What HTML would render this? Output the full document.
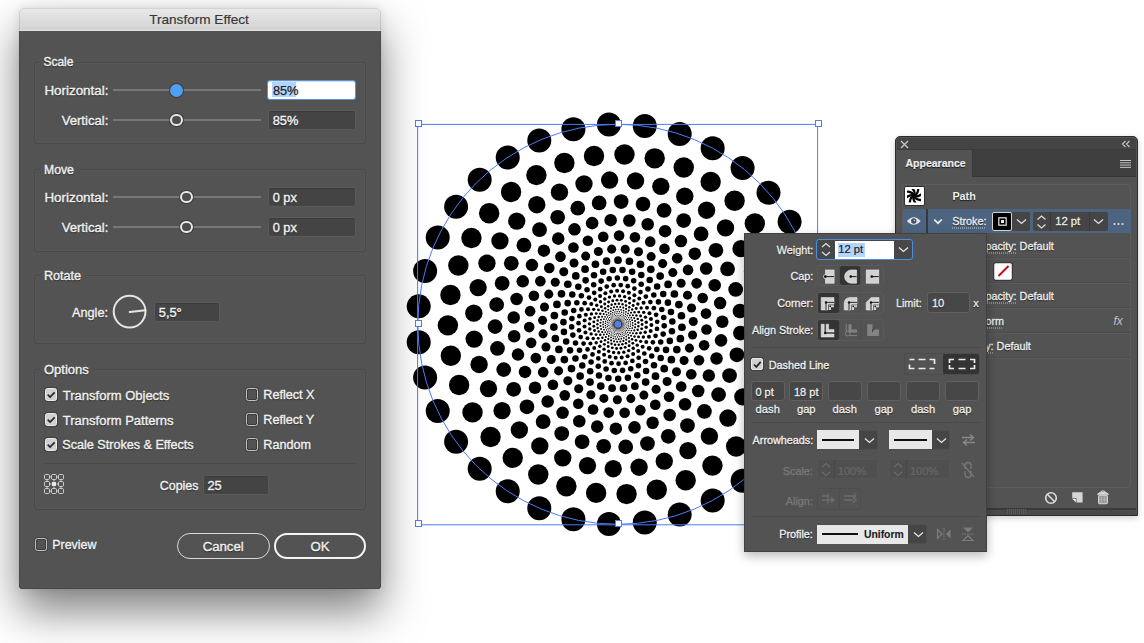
<!DOCTYPE html>
<html><head><meta charset="utf-8">
<style>
*{box-sizing:border-box;margin:0;padding:0}
html,body{width:1144px;height:643px;overflow:hidden;background:#fff;font-family:"Liberation Sans",sans-serif;position:relative}
.a{position:absolute}
.t{position:absolute;white-space:nowrap;line-height:1;color:#efefef}
/* dialog */
#dlgsh{position:absolute;left:19px;top:9px;width:362px;height:579px;border-radius:5px;box-shadow:0 14px 38px rgba(0,0,0,.42),0 0 3px rgba(0,0,0,.25)}
#dlg{position:absolute;left:19px;top:9px;width:362px;height:579px;border-radius:5px 5px 4px 4px;background:#535353;overflow:hidden}
#dlg .title{position:absolute;left:0;top:0;width:362px;height:21.5px;background:linear-gradient(#ececec,#d6d6d6);border-bottom:1px solid #bdbdbd}
.grp{position:absolute;left:16px;width:330px;border:1px solid #4a4a4a;border-radius:3px;box-shadow:inset 0 0 0 1px rgba(255,255,255,.025)}
.lbl{font-size:13px;color:#eeeeee;text-shadow:0 0 1px rgba(0,0,0,.6)}
.legend{background:#535353;padding:0 3px}
.track{position:absolute;height:2px;background:#777}
.thumb{position:absolute;width:12.5px;height:12.5px;border-radius:50%;border:2px solid #e8e8e8;background:#4d4d4d;box-shadow:0 0 0 1px rgba(40,40,40,.6)}
.inp{position:absolute;background:#444;border:1px solid #5a5a5a;border-radius:3px;box-shadow:inset 0 1px 1px rgba(0,0,0,.15)}
.cb{position:absolute;width:12.5px;height:12.8px;border:1.2px solid #c4c4c4;border-radius:2.5px;box-shadow:0 0 0 1px rgba(0,0,0,.18),inset 0 0 0 1px rgba(0,0,0,.3)}
.cbon{background:#d0d0d0;border-color:#ececec;box-shadow:0 0 0 1px rgba(0,0,0,.22)}
.btn{position:absolute;border-radius:13px;border:1.8px solid #dadada}
/* panels */
.pt{font-size:10.7px;color:#e8e8e8}
</style></head><body>
<!-- canvas -->
<svg class="a" style="left:0;top:0" width="1144" height="643" viewBox="0 0 1144 643">
<g fill="#000"><circle cx="817.90" cy="324.30" r="12.00"/>
<circle cx="814.69" cy="360.01" r="12.00"/>
<circle cx="805.15" cy="394.57" r="12.00"/>
<circle cx="789.59" cy="426.88" r="12.00"/>
<circle cx="768.51" cy="455.89" r="12.00"/>
<circle cx="742.60" cy="480.67" r="12.00"/>
<circle cx="712.67" cy="500.42" r="12.00"/>
<circle cx="679.70" cy="514.51" r="12.00"/>
<circle cx="644.75" cy="522.49" r="12.00"/>
<circle cx="608.93" cy="524.10" r="12.00"/>
<circle cx="573.40" cy="519.29" r="12.00"/>
<circle cx="539.29" cy="508.21" r="12.00"/>
<circle cx="507.72" cy="491.21" r="12.00"/>
<circle cx="479.69" cy="468.86" r="12.00"/>
<circle cx="456.10" cy="441.86" r="12.00"/>
<circle cx="437.71" cy="411.08" r="12.00"/>
<circle cx="425.11" cy="377.51" r="12.00"/>
<circle cx="418.71" cy="342.23" r="12.00"/>
<circle cx="418.71" cy="306.37" r="12.00"/>
<circle cx="425.11" cy="271.09" r="12.00"/>
<circle cx="437.71" cy="237.52" r="12.00"/>
<circle cx="456.10" cy="206.74" r="12.00"/>
<circle cx="479.69" cy="179.74" r="12.00"/>
<circle cx="507.72" cy="157.39" r="12.00"/>
<circle cx="539.29" cy="140.39" r="12.00"/>
<circle cx="573.40" cy="129.31" r="12.00"/>
<circle cx="608.93" cy="124.50" r="12.00"/>
<circle cx="644.75" cy="126.11" r="12.00"/>
<circle cx="679.70" cy="134.09" r="12.00"/>
<circle cx="712.67" cy="148.18" r="12.00"/>
<circle cx="742.60" cy="167.93" r="12.00"/>
<circle cx="768.51" cy="192.71" r="12.00"/>
<circle cx="789.59" cy="221.72" r="12.00"/>
<circle cx="805.15" cy="254.03" r="12.00"/>
<circle cx="814.69" cy="288.59" r="12.00"/>
<circle cx="787.12" cy="308.01" r="10.20"/>
<circle cx="787.31" cy="338.48" r="10.20"/>
<circle cx="782.05" cy="368.50" r="10.20"/>
<circle cx="771.52" cy="397.10" r="10.20"/>
<circle cx="756.05" cy="423.36" r="10.20"/>
<circle cx="736.14" cy="446.44" r="10.20"/>
<circle cx="712.44" cy="465.59" r="10.20"/>
<circle cx="685.69" cy="480.20" r="10.20"/>
<circle cx="656.76" cy="489.80" r="10.20"/>
<circle cx="626.59" cy="494.08" r="10.20"/>
<circle cx="596.13" cy="492.90" r="10.20"/>
<circle cx="566.38" cy="486.30" r="10.20"/>
<circle cx="538.28" cy="474.50" r="10.20"/>
<circle cx="512.74" cy="457.87" r="10.20"/>
<circle cx="490.58" cy="436.95" r="10.20"/>
<circle cx="472.51" cy="412.40" r="10.20"/>
<circle cx="459.12" cy="385.02" r="10.20"/>
<circle cx="450.82" cy="355.70" r="10.20"/>
<circle cx="447.90" cy="325.36" r="10.20"/>
<circle cx="450.45" cy="294.99" r="10.20"/>
<circle cx="458.37" cy="265.56" r="10.20"/>
<circle cx="471.42" cy="238.02" r="10.20"/>
<circle cx="489.18" cy="213.25" r="10.20"/>
<circle cx="511.08" cy="192.05" r="10.20"/>
<circle cx="536.41" cy="175.10" r="10.20"/>
<circle cx="564.36" cy="162.95" r="10.20"/>
<circle cx="594.03" cy="155.98" r="10.20"/>
<circle cx="624.47" cy="154.43" r="10.20"/>
<circle cx="654.69" cy="158.33" r="10.20"/>
<circle cx="683.74" cy="167.57" r="10.20"/>
<circle cx="710.67" cy="181.84" r="10.20"/>
<circle cx="734.61" cy="200.69" r="10.20"/>
<circle cx="754.81" cy="223.52" r="10.20"/>
<circle cx="770.60" cy="249.59" r="10.20"/>
<circle cx="781.49" cy="278.05" r="10.20"/>
<circle cx="759.75" cy="296.73" r="8.67"/>
<circle cx="762.39" cy="322.50" r="8.67"/>
<circle cx="760.39" cy="348.33" r="8.67"/>
<circle cx="753.81" cy="373.38" r="8.67"/>
<circle cx="742.86" cy="396.86" r="8.67"/>
<circle cx="727.90" cy="418.01" r="8.67"/>
<circle cx="709.40" cy="436.14" r="8.67"/>
<circle cx="687.95" cy="450.68" r="8.67"/>
<circle cx="664.26" cy="461.16" r="8.67"/>
<circle cx="639.08" cy="467.24" r="8.67"/>
<circle cx="613.22" cy="468.72" r="8.67"/>
<circle cx="587.50" cy="465.57" r="8.67"/>
<circle cx="562.77" cy="457.87" r="8.67"/>
<circle cx="539.80" cy="445.88" r="8.67"/>
<circle cx="519.35" cy="429.98" r="8.67"/>
<circle cx="502.06" cy="410.69" r="8.67"/>
<circle cx="488.50" cy="388.61" r="8.67"/>
<circle cx="479.10" cy="364.48" r="8.67"/>
<circle cx="474.15" cy="339.05" r="8.67"/>
<circle cx="473.83" cy="313.14" r="8.67"/>
<circle cx="478.14" cy="287.60" r="8.67"/>
<circle cx="486.94" cy="263.23" r="8.67"/>
<circle cx="499.95" cy="240.83" r="8.67"/>
<circle cx="516.75" cy="221.11" r="8.67"/>
<circle cx="536.80" cy="204.71" r="8.67"/>
<circle cx="559.46" cy="192.15" r="8.67"/>
<circle cx="583.99" cy="183.83" r="8.67"/>
<circle cx="609.62" cy="180.04" r="8.67"/>
<circle cx="635.51" cy="180.88" r="8.67"/>
<circle cx="660.84" cy="186.33" r="8.67"/>
<circle cx="684.78" cy="196.21" r="8.67"/>
<circle cx="706.58" cy="210.21" r="8.67"/>
<circle cx="725.53" cy="227.88" r="8.67"/>
<circle cx="741.01" cy="248.65" r="8.67"/>
<circle cx="752.54" cy="271.84" r="8.67"/>
<circle cx="735.67" cy="289.42" r="7.37"/>
<circle cx="740.00" cy="311.00" r="7.37"/>
<circle cx="740.42" cy="333.02" r="7.37"/>
<circle cx="736.89" cy="354.76" r="7.37"/>
<circle cx="729.54" cy="375.51" r="7.37"/>
<circle cx="718.60" cy="394.62" r="7.37"/>
<circle cx="704.42" cy="411.47" r="7.37"/>
<circle cx="687.47" cy="425.52" r="7.37"/>
<circle cx="668.28" cy="436.32" r="7.37"/>
<circle cx="647.47" cy="443.51" r="7.37"/>
<circle cx="625.70" cy="446.88" r="7.37"/>
<circle cx="603.69" cy="446.30" r="7.37"/>
<circle cx="582.14" cy="441.80" r="7.37"/>
<circle cx="561.73" cy="433.53" r="7.37"/>
<circle cx="543.13" cy="421.74" r="7.37"/>
<circle cx="526.93" cy="406.83" r="7.37"/>
<circle cx="513.66" cy="389.26" r="7.37"/>
<circle cx="503.73" cy="369.60" r="7.37"/>
<circle cx="497.48" cy="348.49" r="7.37"/>
<circle cx="495.10" cy="326.60" r="7.37"/>
<circle cx="496.66" cy="304.63" r="7.37"/>
<circle cx="502.12" cy="283.30" r="7.37"/>
<circle cx="511.30" cy="263.29" r="7.37"/>
<circle cx="523.91" cy="245.23" r="7.37"/>
<circle cx="539.54" cy="229.72" r="7.37"/>
<circle cx="557.68" cy="217.25" r="7.37"/>
<circle cx="577.77" cy="208.22" r="7.37"/>
<circle cx="599.14" cy="202.92" r="7.37"/>
<circle cx="621.12" cy="201.52" r="7.37"/>
<circle cx="642.99" cy="204.06" r="7.37"/>
<circle cx="664.05" cy="210.48" r="7.37"/>
<circle cx="683.64" cy="220.55" r="7.37"/>
<circle cx="701.10" cy="233.95" r="7.37"/>
<circle cx="715.90" cy="250.26" r="7.37"/>
<circle cx="727.55" cy="268.95" r="7.37"/>
<circle cx="714.70" cy="285.19" r="6.26"/>
<circle cx="720.13" cy="303.10" r="6.26"/>
<circle cx="722.27" cy="321.70" r="6.26"/>
<circle cx="721.06" cy="340.37" r="6.26"/>
<circle cx="716.53" cy="358.54" r="6.26"/>
<circle cx="708.83" cy="375.60" r="6.26"/>
<circle cx="698.21" cy="391.01" r="6.26"/>
<circle cx="685.01" cy="404.28" r="6.26"/>
<circle cx="669.65" cy="414.97" r="6.26"/>
<circle cx="652.63" cy="422.76" r="6.26"/>
<circle cx="634.49" cy="427.37" r="6.26"/>
<circle cx="615.82" cy="428.68" r="6.26"/>
<circle cx="597.21" cy="426.63" r="6.26"/>
<circle cx="579.27" cy="421.29" r="6.26"/>
<circle cx="562.58" cy="412.84" r="6.26"/>
<circle cx="547.66" cy="401.54" r="6.26"/>
<circle cx="534.99" cy="387.75" r="6.26"/>
<circle cx="525.00" cy="371.93" r="6.26"/>
<circle cx="517.98" cy="354.57" r="6.26"/>
<circle cx="514.18" cy="336.25" r="6.26"/>
<circle cx="513.72" cy="317.54" r="6.26"/>
<circle cx="516.60" cy="299.04" r="6.26"/>
<circle cx="522.74" cy="281.36" r="6.26"/>
<circle cx="531.93" cy="265.06" r="6.26"/>
<circle cx="543.89" cy="250.66" r="6.26"/>
<circle cx="558.23" cy="238.63" r="6.26"/>
<circle cx="574.49" cy="229.35" r="6.26"/>
<circle cx="592.14" cy="223.13" r="6.26"/>
<circle cx="610.62" cy="220.15" r="6.26"/>
<circle cx="629.33" cy="220.53" r="6.26"/>
<circle cx="647.68" cy="224.24" r="6.26"/>
<circle cx="665.07" cy="231.16" r="6.26"/>
<circle cx="680.94" cy="241.08" r="6.26"/>
<circle cx="694.78" cy="253.67" r="6.26"/>
<circle cx="706.16" cy="268.53" r="6.26"/>
<circle cx="696.61" cy="283.32" r="5.32"/>
<circle cx="702.67" cy="298.04" r="5.32"/>
<circle cx="705.99" cy="313.59" r="5.32"/>
<circle cx="706.49" cy="329.50" r="5.32"/>
<circle cx="704.14" cy="345.23" r="5.32"/>
<circle cx="699.01" cy="360.29" r="5.32"/>
<circle cx="691.28" cy="374.20" r="5.32"/>
<circle cx="681.19" cy="386.50" r="5.32"/>
<circle cx="669.07" cy="396.80" r="5.32"/>
<circle cx="655.30" cy="404.77" r="5.32"/>
<circle cx="640.33" cy="410.16" r="5.32"/>
<circle cx="624.64" cy="412.78" r="5.32"/>
<circle cx="608.73" cy="412.57" r="5.32"/>
<circle cx="593.12" cy="409.51" r="5.32"/>
<circle cx="578.30" cy="403.72" r="5.32"/>
<circle cx="564.76" cy="395.37" r="5.32"/>
<circle cx="552.92" cy="384.74" r="5.32"/>
<circle cx="543.18" cy="372.17" r="5.32"/>
<circle cx="535.83" cy="358.06" r="5.32"/>
<circle cx="531.12" cy="342.86" r="5.32"/>
<circle cx="529.20" cy="327.07" r="5.32"/>
<circle cx="530.13" cy="311.18" r="5.32"/>
<circle cx="533.89" cy="295.72" r="5.32"/>
<circle cx="540.34" cy="281.18" r="5.32"/>
<circle cx="549.28" cy="268.02" r="5.32"/>
<circle cx="560.44" cy="256.68" r="5.32"/>
<circle cx="573.43" cy="247.50" r="5.32"/>
<circle cx="587.86" cy="240.80" r="5.32"/>
<circle cx="603.25" cy="236.78" r="5.32"/>
<circle cx="619.12" cy="235.57" r="5.32"/>
<circle cx="634.94" cy="237.21" r="5.32"/>
<circle cx="650.22" cy="241.65" r="5.32"/>
<circle cx="664.46" cy="248.75" r="5.32"/>
<circle cx="677.20" cy="258.28" r="5.32"/>
<circle cx="688.03" cy="269.93" r="5.32"/>
<circle cx="681.16" cy="283.22" r="4.53"/>
<circle cx="687.48" cy="295.17" r="4.53"/>
<circle cx="691.56" cy="308.07" r="4.53"/>
<circle cx="693.28" cy="321.48" r="4.53"/>
<circle cx="692.57" cy="334.98" r="4.53"/>
<circle cx="689.46" cy="348.15" r="4.53"/>
<circle cx="684.05" cy="360.54" r="4.53"/>
<circle cx="676.52" cy="371.77" r="4.53"/>
<circle cx="667.10" cy="381.47" r="4.53"/>
<circle cx="656.10" cy="389.34" r="4.53"/>
<circle cx="643.88" cy="395.12" r="4.53"/>
<circle cx="630.81" cy="398.62" r="4.53"/>
<circle cx="617.34" cy="399.73" r="4.53"/>
<circle cx="603.88" cy="398.41" r="4.53"/>
<circle cx="590.87" cy="394.72" r="4.53"/>
<circle cx="578.73" cy="388.76" r="4.53"/>
<circle cx="567.85" cy="380.73" r="4.53"/>
<circle cx="558.58" cy="370.89" r="4.53"/>
<circle cx="551.21" cy="359.55" r="4.53"/>
<circle cx="545.99" cy="347.07" r="4.53"/>
<circle cx="543.08" cy="333.87" r="4.53"/>
<circle cx="542.57" cy="320.35" r="4.53"/>
<circle cx="544.49" cy="306.97" r="4.53"/>
<circle cx="548.76" cy="294.14" r="4.53"/>
<circle cx="555.26" cy="282.28" r="4.53"/>
<circle cx="563.77" cy="271.77" r="4.53"/>
<circle cx="574.02" cy="262.95" r="4.53"/>
<circle cx="585.68" cy="256.10" r="4.53"/>
<circle cx="598.38" cy="251.44" r="4.53"/>
<circle cx="611.70" cy="249.13" r="4.53"/>
<circle cx="625.22" cy="249.23" r="4.53"/>
<circle cx="638.51" cy="251.74" r="4.53"/>
<circle cx="651.14" cy="256.59" r="4.53"/>
<circle cx="662.69" cy="263.61" r="4.53"/>
<circle cx="672.81" cy="272.58" r="4.53"/>
<circle cx="668.08" cy="284.39" r="3.85"/>
<circle cx="674.40" cy="293.99" r="3.85"/>
<circle cx="678.90" cy="304.56" r="3.85"/>
<circle cx="681.45" cy="315.77" r="3.85"/>
<circle cx="681.95" cy="327.26" r="3.85"/>
<circle cx="680.39" cy="338.64" r="3.85"/>
<circle cx="676.82" cy="349.57" r="3.85"/>
<circle cx="671.36" cy="359.69" r="3.85"/>
<circle cx="664.19" cy="368.67" r="3.85"/>
<circle cx="655.52" cy="376.22" r="3.85"/>
<circle cx="645.65" cy="382.10" r="3.85"/>
<circle cx="634.88" cy="386.13" r="3.85"/>
<circle cx="623.57" cy="388.16" r="3.85"/>
<circle cx="612.07" cy="388.15" r="3.85"/>
<circle cx="600.77" cy="386.08" r="3.85"/>
<circle cx="590.01" cy="382.03" r="3.85"/>
<circle cx="580.15" cy="376.12" r="3.85"/>
<circle cx="571.50" cy="368.55" r="3.85"/>
<circle cx="564.35" cy="359.55" r="3.85"/>
<circle cx="558.91" cy="349.43" r="3.85"/>
<circle cx="555.37" cy="338.49" r="3.85"/>
<circle cx="553.85" cy="327.10" r="3.85"/>
<circle cx="554.38" cy="315.61" r="3.85"/>
<circle cx="556.95" cy="304.41" r="3.85"/>
<circle cx="561.48" cy="293.85" r="3.85"/>
<circle cx="567.82" cy="284.26" r="3.85"/>
<circle cx="575.78" cy="275.96" r="3.85"/>
<circle cx="585.08" cy="269.22" r="3.85"/>
<circle cx="595.45" cy="264.24" r="3.85"/>
<circle cx="606.53" cy="261.20" r="3.85"/>
<circle cx="617.98" cy="260.18" r="3.85"/>
<circle cx="629.43" cy="261.23" r="3.85"/>
<circle cx="640.50" cy="264.30" r="3.85"/>
<circle cx="650.85" cy="269.30" r="3.85"/>
<circle cx="660.14" cy="276.07" r="3.85"/>
<circle cx="657.10" cy="286.44" r="3.27"/>
<circle cx="663.23" cy="294.05" r="3.27"/>
<circle cx="667.91" cy="302.63" r="3.27"/>
<circle cx="670.97" cy="311.91" r="3.27"/>
<circle cx="672.33" cy="321.58" r="3.27"/>
<circle cx="671.94" cy="331.35" r="3.27"/>
<circle cx="669.81" cy="340.88" r="3.27"/>
<circle cx="666.02" cy="349.89" r="3.27"/>
<circle cx="660.68" cy="358.07" r="3.27"/>
<circle cx="653.96" cy="365.16" r="3.27"/>
<circle cx="646.08" cy="370.94" r="3.27"/>
<circle cx="637.30" cy="375.23" r="3.27"/>
<circle cx="627.90" cy="377.87" r="3.27"/>
<circle cx="618.17" cy="378.80" r="3.27"/>
<circle cx="608.44" cy="377.97" r="3.27"/>
<circle cx="599.01" cy="375.42" r="3.27"/>
<circle cx="590.18" cy="371.22" r="3.27"/>
<circle cx="582.25" cy="365.52" r="3.27"/>
<circle cx="575.46" cy="358.49" r="3.27"/>
<circle cx="570.04" cy="350.36" r="3.27"/>
<circle cx="566.15" cy="341.40" r="3.27"/>
<circle cx="563.93" cy="331.88" r="3.27"/>
<circle cx="563.45" cy="322.13" r="3.27"/>
<circle cx="564.71" cy="312.44" r="3.27"/>
<circle cx="567.68" cy="303.13" r="3.27"/>
<circle cx="572.27" cy="294.50" r="3.27"/>
<circle cx="578.32" cy="286.84" r="3.27"/>
<circle cx="585.65" cy="280.37" r="3.27"/>
<circle cx="594.01" cy="275.32" r="3.27"/>
<circle cx="603.14" cy="271.84" r="3.27"/>
<circle cx="612.74" cy="270.05" r="3.27"/>
<circle cx="622.51" cy="270.00" r="3.27"/>
<circle cx="632.14" cy="271.69" r="3.27"/>
<circle cx="641.30" cy="275.08" r="3.27"/>
<circle cx="649.71" cy="280.05" r="3.27"/>
<circle cx="647.98" cy="289.08" r="2.78"/>
<circle cx="653.79" cy="295.01" r="2.78"/>
<circle cx="658.44" cy="301.89" r="2.78"/>
<circle cx="661.79" cy="309.49" r="2.78"/>
<circle cx="663.73" cy="317.57" r="2.78"/>
<circle cx="664.20" cy="325.86" r="2.78"/>
<circle cx="663.17" cy="334.10" r="2.78"/>
<circle cx="660.70" cy="342.03" r="2.78"/>
<circle cx="656.84" cy="349.38" r="2.78"/>
<circle cx="651.74" cy="355.93" r="2.78"/>
<circle cx="645.55" cy="361.47" r="2.78"/>
<circle cx="638.47" cy="365.81" r="2.78"/>
<circle cx="630.72" cy="368.81" r="2.78"/>
<circle cx="622.57" cy="370.39" r="2.78"/>
<circle cx="614.27" cy="370.48" r="2.78"/>
<circle cx="606.08" cy="369.09" r="2.78"/>
<circle cx="598.27" cy="366.26" r="2.78"/>
<circle cx="591.09" cy="362.08" r="2.78"/>
<circle cx="584.78" cy="356.69" r="2.78"/>
<circle cx="579.53" cy="350.25" r="2.78"/>
<circle cx="575.51" cy="342.98" r="2.78"/>
<circle cx="572.86" cy="335.11" r="2.78"/>
<circle cx="571.65" cy="326.90" r="2.78"/>
<circle cx="571.93" cy="318.60" r="2.78"/>
<circle cx="573.69" cy="310.48" r="2.78"/>
<circle cx="576.86" cy="302.81" r="2.78"/>
<circle cx="581.36" cy="295.83" r="2.78"/>
<circle cx="587.03" cy="289.76" r="2.78"/>
<circle cx="593.70" cy="284.80" r="2.78"/>
<circle cx="601.14" cy="281.12" r="2.78"/>
<circle cx="609.12" cy="278.82" r="2.78"/>
<circle cx="617.38" cy="277.98" r="2.78"/>
<circle cx="625.66" cy="278.63" r="2.78"/>
<circle cx="633.69" cy="280.75" r="2.78"/>
<circle cx="641.21" cy="284.27" r="2.78"/>
<circle cx="640.48" cy="292.05" r="2.36"/>
<circle cx="645.88" cy="296.60" r="2.36"/>
<circle cx="650.38" cy="302.04" r="2.36"/>
<circle cx="653.83" cy="308.20" r="2.36"/>
<circle cx="656.13" cy="314.87" r="2.36"/>
<circle cx="657.20" cy="321.85" r="2.36"/>
<circle cx="657.00" cy="328.90" r="2.36"/>
<circle cx="655.55" cy="335.81" r="2.36"/>
<circle cx="652.89" cy="342.35" r="2.36"/>
<circle cx="649.11" cy="348.31" r="2.36"/>
<circle cx="644.32" cy="353.50" r="2.36"/>
<circle cx="638.68" cy="357.74" r="2.36"/>
<circle cx="632.38" cy="360.92" r="2.36"/>
<circle cx="625.61" cy="362.91" r="2.36"/>
<circle cx="618.59" cy="363.67" r="2.36"/>
<circle cx="611.55" cy="363.16" r="2.36"/>
<circle cx="604.71" cy="361.40" r="2.36"/>
<circle cx="598.30" cy="358.45" r="2.36"/>
<circle cx="592.52" cy="354.40" r="2.36"/>
<circle cx="587.55" cy="349.38" r="2.36"/>
<circle cx="583.56" cy="343.56" r="2.36"/>
<circle cx="580.67" cy="337.12" r="2.36"/>
<circle cx="578.98" cy="330.27" r="2.36"/>
<circle cx="578.54" cy="323.22" r="2.36"/>
<circle cx="579.37" cy="316.21" r="2.36"/>
<circle cx="581.43" cy="309.46" r="2.36"/>
<circle cx="584.67" cy="303.19" r="2.36"/>
<circle cx="588.97" cy="297.59" r="2.36"/>
<circle cx="594.20" cy="292.85" r="2.36"/>
<circle cx="600.20" cy="289.13" r="2.36"/>
<circle cx="606.76" cy="286.53" r="2.36"/>
<circle cx="613.69" cy="285.15" r="2.36"/>
<circle cx="620.74" cy="285.03" r="2.36"/>
<circle cx="627.71" cy="286.17" r="2.36"/>
<circle cx="634.36" cy="288.53" r="2.36"/>
<circle cx="634.38" cy="295.17" r="2.01"/>
<circle cx="639.32" cy="298.58" r="2.01"/>
<circle cx="643.57" cy="302.82" r="2.01"/>
<circle cx="646.99" cy="307.75" r="2.01"/>
<circle cx="649.48" cy="313.21" r="2.01"/>
<circle cx="650.95" cy="319.02" r="2.01"/>
<circle cx="651.36" cy="325.01" r="2.01"/>
<circle cx="650.70" cy="330.97" r="2.01"/>
<circle cx="648.98" cy="336.72" r="2.01"/>
<circle cx="646.26" cy="342.07" r="2.01"/>
<circle cx="642.63" cy="346.85" r="2.01"/>
<circle cx="638.21" cy="350.90" r="2.01"/>
<circle cx="633.13" cy="354.10" r="2.01"/>
<circle cx="627.57" cy="356.34" r="2.01"/>
<circle cx="621.69" cy="357.55" r="2.01"/>
<circle cx="615.69" cy="357.70" r="2.01"/>
<circle cx="609.76" cy="356.76" r="2.01"/>
<circle cx="604.10" cy="354.79" r="2.01"/>
<circle cx="598.87" cy="351.84" r="2.01"/>
<circle cx="594.26" cy="348.00" r="2.01"/>
<circle cx="590.41" cy="343.39" r="2.01"/>
<circle cx="587.44" cy="338.18" r="2.01"/>
<circle cx="585.46" cy="332.52" r="2.01"/>
<circle cx="584.51" cy="326.59" r="2.01"/>
<circle cx="584.64" cy="320.59" r="2.01"/>
<circle cx="585.83" cy="314.71" r="2.01"/>
<circle cx="588.06" cy="309.14" r="2.01"/>
<circle cx="591.25" cy="304.06" r="2.01"/>
<circle cx="595.29" cy="299.62" r="2.01"/>
<circle cx="600.06" cy="295.98" r="2.01"/>
<circle cx="605.40" cy="293.25" r="2.01"/>
<circle cx="611.15" cy="291.52" r="2.01"/>
<circle cx="617.11" cy="290.84" r="2.01"/>
<circle cx="623.09" cy="291.24" r="2.01"/>
<circle cx="628.91" cy="292.70" r="2.01"/>
<circle cx="629.47" cy="298.31" r="1.71"/>
<circle cx="633.93" cy="300.79" r="1.71"/>
<circle cx="637.86" cy="304.03" r="1.71"/>
<circle cx="641.16" cy="307.92" r="1.71"/>
<circle cx="643.71" cy="312.34" r="1.71"/>
<circle cx="645.43" cy="317.14" r="1.71"/>
<circle cx="646.27" cy="322.17" r="1.71"/>
<circle cx="646.19" cy="327.27" r="1.71"/>
<circle cx="645.21" cy="332.28" r="1.71"/>
<circle cx="643.34" cy="337.03" r="1.71"/>
<circle cx="640.66" cy="341.36" r="1.71"/>
<circle cx="637.25" cy="345.15" r="1.71"/>
<circle cx="633.22" cy="348.27" r="1.71"/>
<circle cx="628.69" cy="350.62" r="1.71"/>
<circle cx="623.81" cy="352.13" r="1.71"/>
<circle cx="618.75" cy="352.74" r="1.71"/>
<circle cx="613.66" cy="352.43" r="1.71"/>
<circle cx="608.71" cy="351.22" r="1.71"/>
<circle cx="604.05" cy="349.15" r="1.71"/>
<circle cx="599.83" cy="346.27" r="1.71"/>
<circle cx="596.20" cy="342.69" r="1.71"/>
<circle cx="593.26" cy="338.52" r="1.71"/>
<circle cx="591.12" cy="333.90" r="1.71"/>
<circle cx="589.84" cy="328.96" r="1.71"/>
<circle cx="589.45" cy="323.87" r="1.71"/>
<circle cx="589.99" cy="318.80" r="1.71"/>
<circle cx="591.42" cy="313.91" r="1.71"/>
<circle cx="593.70" cy="309.35" r="1.71"/>
<circle cx="596.76" cy="305.26" r="1.71"/>
<circle cx="600.50" cy="301.80" r="1.71"/>
<circle cx="604.80" cy="299.05" r="1.71"/>
<circle cx="609.51" cy="297.12" r="1.71"/>
<circle cx="614.50" cy="296.06" r="1.71"/>
<circle cx="619.60" cy="295.90" r="1.71"/>
<circle cx="624.64" cy="296.66" r="1.71"/>
<circle cx="625.57" cy="301.37" r="1.45"/>
<circle cx="629.54" cy="303.11" r="1.45"/>
<circle cx="633.14" cy="305.53" r="1.45"/>
<circle cx="636.25" cy="308.55" r="1.45"/>
<circle cx="638.77" cy="312.08" r="1.45"/>
<circle cx="640.61" cy="316.00" r="1.45"/>
<circle cx="641.73" cy="320.19" r="1.45"/>
<circle cx="642.08" cy="324.51" r="1.45"/>
<circle cx="641.65" cy="328.83" r="1.45"/>
<circle cx="640.46" cy="332.99" r="1.45"/>
<circle cx="638.55" cy="336.88" r="1.45"/>
<circle cx="635.97" cy="340.37" r="1.45"/>
<circle cx="632.81" cy="343.34" r="1.45"/>
<circle cx="629.17" cy="345.69" r="1.45"/>
<circle cx="625.17" cy="347.36" r="1.45"/>
<circle cx="620.94" cy="348.29" r="1.45"/>
<circle cx="616.60" cy="348.45" r="1.45"/>
<circle cx="612.31" cy="347.83" r="1.45"/>
<circle cx="608.20" cy="346.45" r="1.45"/>
<circle cx="604.40" cy="344.36" r="1.45"/>
<circle cx="601.04" cy="341.63" r="1.45"/>
<circle cx="598.21" cy="338.34" r="1.45"/>
<circle cx="596.02" cy="334.60" r="1.45"/>
<circle cx="594.54" cy="330.53" r="1.45"/>
<circle cx="593.80" cy="326.26" r="1.45"/>
<circle cx="593.84" cy="321.92" r="1.45"/>
<circle cx="594.65" cy="317.66" r="1.45"/>
<circle cx="596.21" cy="313.62" r="1.45"/>
<circle cx="598.46" cy="309.92" r="1.45"/>
<circle cx="601.34" cy="306.68" r="1.45"/>
<circle cx="604.76" cy="304.00" r="1.45"/>
<circle cx="608.59" cy="301.98" r="1.45"/>
<circle cx="612.73" cy="300.68" r="1.45"/>
<circle cx="617.03" cy="300.13" r="1.45"/>
<circle cx="621.35" cy="300.37" r="1.45"/>
<circle cx="622.52" cy="304.27" r="1.23"/>
<circle cx="626.03" cy="305.42" r="1.23"/>
<circle cx="629.27" cy="307.17" r="1.23"/>
<circle cx="632.14" cy="309.48" r="1.23"/>
<circle cx="634.56" cy="312.26" r="1.23"/>
<circle cx="636.44" cy="315.43" r="1.23"/>
<circle cx="637.73" cy="318.88" r="1.23"/>
<circle cx="638.38" cy="322.51" r="1.23"/>
<circle cx="638.37" cy="326.19" r="1.23"/>
<circle cx="637.70" cy="329.82" r="1.23"/>
<circle cx="636.40" cy="333.26" r="1.23"/>
<circle cx="634.50" cy="336.42" r="1.23"/>
<circle cx="632.07" cy="339.19" r="1.23"/>
<circle cx="629.18" cy="341.48" r="1.23"/>
<circle cx="625.93" cy="343.22" r="1.23"/>
<circle cx="622.42" cy="344.35" r="1.23"/>
<circle cx="618.77" cy="344.84" r="1.23"/>
<circle cx="615.09" cy="344.66" r="1.23"/>
<circle cx="611.50" cy="343.83" r="1.23"/>
<circle cx="608.12" cy="342.38" r="1.23"/>
<circle cx="605.04" cy="340.34" r="1.23"/>
<circle cx="602.39" cy="337.78" r="1.23"/>
<circle cx="600.23" cy="334.80" r="1.23"/>
<circle cx="598.64" cy="331.47" r="1.23"/>
<circle cx="597.67" cy="327.92" r="1.23"/>
<circle cx="597.35" cy="324.25" r="1.23"/>
<circle cx="597.69" cy="320.58" r="1.23"/>
<circle cx="598.67" cy="317.03" r="1.23"/>
<circle cx="600.28" cy="313.71" r="1.23"/>
<circle cx="602.46" cy="310.74" r="1.23"/>
<circle cx="605.12" cy="308.20" r="1.23"/>
<circle cx="608.21" cy="306.18" r="1.23"/>
<circle cx="611.60" cy="304.74" r="1.23"/>
<circle cx="615.19" cy="303.93" r="1.23"/>
<circle cx="618.87" cy="303.77" r="1.23"/>
<circle cx="620.18" cy="306.98" r="1.05"/>
<circle cx="623.24" cy="307.66" r="1.05"/>
<circle cx="626.12" cy="308.88" r="1.05"/>
<circle cx="628.74" cy="310.60" r="1.05"/>
<circle cx="631.01" cy="312.76" r="1.05"/>
<circle cx="632.86" cy="315.28" r="1.05"/>
<circle cx="634.23" cy="318.10" r="1.05"/>
<circle cx="635.08" cy="321.12" r="1.05"/>
<circle cx="635.37" cy="324.23" r="1.05"/>
<circle cx="635.10" cy="327.36" r="1.05"/>
<circle cx="634.28" cy="330.38" r="1.05"/>
<circle cx="632.93" cy="333.20" r="1.05"/>
<circle cx="631.10" cy="335.75" r="1.05"/>
<circle cx="628.84" cy="337.92" r="1.05"/>
<circle cx="626.24" cy="339.65" r="1.05"/>
<circle cx="623.36" cy="340.90" r="1.05"/>
<circle cx="620.31" cy="341.60" r="1.05"/>
<circle cx="617.18" cy="341.76" r="1.05"/>
<circle cx="614.08" cy="341.35" r="1.05"/>
<circle cx="611.09" cy="340.39" r="1.05"/>
<circle cx="608.33" cy="338.92" r="1.05"/>
<circle cx="605.87" cy="336.97" r="1.05"/>
<circle cx="603.80" cy="334.62" r="1.05"/>
<circle cx="602.19" cy="331.94" r="1.05"/>
<circle cx="601.08" cy="329.01" r="1.05"/>
<circle cx="600.51" cy="325.93" r="1.05"/>
<circle cx="600.49" cy="322.80" r="1.05"/>
<circle cx="601.04" cy="319.72" r="1.05"/>
<circle cx="602.13" cy="316.78" r="1.05"/>
<circle cx="603.73" cy="314.08" r="1.05"/>
<circle cx="605.78" cy="311.72" r="1.05"/>
<circle cx="608.22" cy="309.76" r="1.05"/>
<circle cx="610.97" cy="308.26" r="1.05"/>
<circle cx="613.95" cy="307.28" r="1.05"/>
<circle cx="617.05" cy="306.85" r="1.05"/>
<circle cx="618.42" cy="309.46" r="0.89"/>
<circle cx="621.06" cy="309.79" r="0.89"/>
<circle cx="623.60" cy="310.59" r="0.89"/>
<circle cx="625.96" cy="311.83" r="0.89"/>
<circle cx="628.05" cy="313.46" r="0.89"/>
<circle cx="629.83" cy="315.45" r="0.89"/>
<circle cx="631.21" cy="317.72" r="0.89"/>
<circle cx="632.17" cy="320.21" r="0.89"/>
<circle cx="632.68" cy="322.82" r="0.89"/>
<circle cx="632.70" cy="325.48" r="0.89"/>
<circle cx="632.25" cy="328.11" r="0.89"/>
<circle cx="631.34" cy="330.61" r="0.89"/>
<circle cx="630.00" cy="332.91" r="0.89"/>
<circle cx="628.27" cy="334.93" r="0.89"/>
<circle cx="626.20" cy="336.61" r="0.89"/>
<circle cx="623.87" cy="337.90" r="0.89"/>
<circle cx="621.35" cy="338.74" r="0.89"/>
<circle cx="618.71" cy="339.13" r="0.89"/>
<circle cx="616.05" cy="339.03" r="0.89"/>
<circle cx="613.45" cy="338.47" r="0.89"/>
<circle cx="610.99" cy="337.45" r="0.89"/>
<circle cx="608.76" cy="336.00" r="0.89"/>
<circle cx="606.81" cy="334.18" r="0.89"/>
<circle cx="605.23" cy="332.04" r="0.89"/>
<circle cx="604.05" cy="329.66" r="0.89"/>
<circle cx="603.32" cy="327.10" r="0.89"/>
<circle cx="603.05" cy="324.45" r="0.89"/>
<circle cx="603.26" cy="321.79" r="0.89"/>
<circle cx="603.95" cy="319.22" r="0.89"/>
<circle cx="605.08" cy="316.81" r="0.89"/>
<circle cx="606.62" cy="314.64" r="0.89"/>
<circle cx="608.53" cy="312.78" r="0.89"/>
<circle cx="610.73" cy="311.29" r="0.89"/>
<circle cx="613.17" cy="310.22" r="0.89"/>
<circle cx="615.76" cy="309.60" r="0.89"/>
<circle cx="617.13" cy="311.70" r="0.76"/>
<circle cx="619.39" cy="311.77" r="0.76"/>
<circle cx="621.61" cy="312.23" r="0.76"/>
<circle cx="623.70" cy="313.09" r="0.76"/>
<circle cx="625.61" cy="314.30" r="0.76"/>
<circle cx="627.27" cy="315.84" r="0.76"/>
<circle cx="628.63" cy="317.65" r="0.76"/>
<circle cx="629.64" cy="319.67" r="0.76"/>
<circle cx="630.28" cy="321.85" r="0.76"/>
<circle cx="630.52" cy="324.10" r="0.76"/>
<circle cx="630.35" cy="326.35" r="0.76"/>
<circle cx="629.79" cy="328.54" r="0.76"/>
<circle cx="628.84" cy="330.60" r="0.76"/>
<circle cx="627.54" cy="332.45" r="0.76"/>
<circle cx="625.93" cy="334.04" r="0.76"/>
<circle cx="624.06" cy="335.32" r="0.76"/>
<circle cx="621.99" cy="336.24" r="0.76"/>
<circle cx="619.80" cy="336.78" r="0.76"/>
<circle cx="617.54" cy="336.92" r="0.76"/>
<circle cx="615.29" cy="336.65" r="0.76"/>
<circle cx="613.13" cy="335.99" r="0.76"/>
<circle cx="611.12" cy="334.95" r="0.76"/>
<circle cx="609.33" cy="333.56" r="0.76"/>
<circle cx="607.81" cy="331.88" r="0.76"/>
<circle cx="606.62" cy="329.96" r="0.76"/>
<circle cx="605.79" cy="327.85" r="0.76"/>
<circle cx="605.35" cy="325.64" r="0.76"/>
<circle cx="605.31" cy="323.37" r="0.76"/>
<circle cx="605.68" cy="321.14" r="0.76"/>
<circle cx="606.44" cy="319.01" r="0.76"/>
<circle cx="607.57" cy="317.05" r="0.76"/>
<circle cx="609.03" cy="315.32" r="0.76"/>
<circle cx="610.78" cy="313.88" r="0.76"/>
<circle cx="612.75" cy="312.78" r="0.76"/>
<circle cx="614.89" cy="312.04" r="0.76"/>
<circle cx="616.22" cy="313.70" r="0.64"/>
<circle cx="618.14" cy="313.57" r="0.64"/>
<circle cx="620.05" cy="313.79" r="0.64"/>
<circle cx="621.89" cy="314.34" r="0.64"/>
<circle cx="623.61" cy="315.22" r="0.64"/>
<circle cx="625.14" cy="316.38" r="0.64"/>
<circle cx="626.44" cy="317.80" r="0.64"/>
<circle cx="627.46" cy="319.43" r="0.64"/>
<circle cx="628.18" cy="321.21" r="0.64"/>
<circle cx="628.56" cy="323.10" r="0.64"/>
<circle cx="628.60" cy="325.02" r="0.64"/>
<circle cx="628.30" cy="326.92" r="0.64"/>
<circle cx="627.67" cy="328.74" r="0.64"/>
<circle cx="626.72" cy="330.41" r="0.64"/>
<circle cx="625.49" cy="331.89" r="0.64"/>
<circle cx="624.01" cy="333.12" r="0.64"/>
<circle cx="622.34" cy="334.07" r="0.64"/>
<circle cx="620.52" cy="334.70" r="0.64"/>
<circle cx="618.62" cy="335.00" r="0.64"/>
<circle cx="616.70" cy="334.96" r="0.64"/>
<circle cx="614.81" cy="334.58" r="0.64"/>
<circle cx="613.03" cy="333.86" r="0.64"/>
<circle cx="611.40" cy="332.84" r="0.64"/>
<circle cx="609.98" cy="331.54" r="0.64"/>
<circle cx="608.82" cy="330.01" r="0.64"/>
<circle cx="607.94" cy="328.29" r="0.64"/>
<circle cx="607.39" cy="326.45" r="0.64"/>
<circle cx="607.17" cy="324.54" r="0.64"/>
<circle cx="607.30" cy="322.62" r="0.64"/>
<circle cx="607.77" cy="320.76" r="0.64"/>
<circle cx="608.57" cy="319.01" r="0.64"/>
<circle cx="609.66" cy="317.42" r="0.64"/>
<circle cx="611.02" cy="316.06" r="0.64"/>
<circle cx="612.61" cy="314.97" r="0.64"/>
<circle cx="614.36" cy="314.17" r="0.64"/>
<circle cx="615.62" cy="315.47" r="0.55"/>
<circle cx="617.23" cy="315.20" r="0.55"/>
<circle cx="618.86" cy="315.23" r="0.55"/>
<circle cx="620.47" cy="315.55" r="0.55"/>
<circle cx="621.99" cy="316.15" r="0.55"/>
<circle cx="623.38" cy="317.01" r="0.55"/>
<circle cx="624.59" cy="318.11" r="0.55"/>
<circle cx="625.59" cy="319.40" r="0.55"/>
<circle cx="626.34" cy="320.85" r="0.55"/>
<circle cx="626.82" cy="322.41" r="0.55"/>
<circle cx="627.02" cy="324.04" r="0.55"/>
<circle cx="626.92" cy="325.67" r="0.55"/>
<circle cx="626.53" cy="327.26" r="0.55"/>
<circle cx="625.86" cy="328.75" r="0.55"/>
<circle cx="624.94" cy="330.10" r="0.55"/>
<circle cx="623.79" cy="331.26" r="0.55"/>
<circle cx="622.45" cy="332.20" r="0.55"/>
<circle cx="620.97" cy="332.89" r="0.55"/>
<circle cx="619.38" cy="333.30" r="0.55"/>
<circle cx="617.75" cy="333.42" r="0.55"/>
<circle cx="616.13" cy="333.25" r="0.55"/>
<circle cx="614.56" cy="332.79" r="0.55"/>
<circle cx="613.10" cy="332.05" r="0.55"/>
<circle cx="611.79" cy="331.07" r="0.55"/>
<circle cx="610.68" cy="329.87" r="0.55"/>
<circle cx="609.80" cy="328.49" r="0.55"/>
<circle cx="609.18" cy="326.98" r="0.55"/>
<circle cx="608.84" cy="325.38" r="0.55"/>
<circle cx="608.80" cy="323.74" r="0.55"/>
<circle cx="609.04" cy="322.13" r="0.55"/>
<circle cx="609.57" cy="320.58" r="0.55"/>
<circle cx="610.37" cy="319.15" r="0.55"/>
<circle cx="611.41" cy="317.89" r="0.55"/>
<circle cx="612.66" cy="316.84" r="0.55"/>
<circle cx="614.08" cy="316.02" r="0.55"/>
<circle cx="615.25" cy="317.02" r="0.47"/>
<circle cx="616.59" cy="316.66" r="0.47"/>
<circle cx="617.98" cy="316.55" r="0.47"/>
<circle cx="619.36" cy="316.69" r="0.47"/>
<circle cx="620.70" cy="317.07" r="0.47"/>
<circle cx="621.94" cy="317.69" r="0.47"/>
<circle cx="623.06" cy="318.51" r="0.47"/>
<circle cx="624.01" cy="319.53" r="0.47"/>
<circle cx="624.76" cy="320.69" r="0.47"/>
<circle cx="625.30" cy="321.98" r="0.47"/>
<circle cx="625.59" cy="323.34" r="0.47"/>
<circle cx="625.64" cy="324.73" r="0.47"/>
<circle cx="625.44" cy="326.10" r="0.47"/>
<circle cx="625.00" cy="327.42" r="0.47"/>
<circle cx="624.33" cy="328.63" r="0.47"/>
<circle cx="623.45" cy="329.71" r="0.47"/>
<circle cx="622.39" cy="330.62" r="0.47"/>
<circle cx="621.19" cy="331.32" r="0.47"/>
<circle cx="619.89" cy="331.79" r="0.47"/>
<circle cx="618.52" cy="332.03" r="0.47"/>
<circle cx="617.13" cy="332.01" r="0.47"/>
<circle cx="615.76" cy="331.75" r="0.47"/>
<circle cx="614.47" cy="331.25" r="0.47"/>
<circle cx="613.28" cy="330.53" r="0.47"/>
<circle cx="612.24" cy="329.60" r="0.47"/>
<circle cx="611.39" cy="328.51" r="0.47"/>
<circle cx="610.74" cy="327.28" r="0.47"/>
<circle cx="610.33" cy="325.95" r="0.47"/>
<circle cx="610.15" cy="324.57" r="0.47"/>
<circle cx="610.23" cy="323.18" r="0.47"/>
<circle cx="610.55" cy="321.83" r="0.47"/>
<circle cx="611.11" cy="320.56" r="0.47"/>
<circle cx="611.89" cy="319.41" r="0.47"/>
<circle cx="612.86" cy="318.41" r="0.47"/>
<circle cx="613.99" cy="317.61" r="0.47"/>
<circle cx="615.06" cy="318.35" r="0.46"/>
<circle cx="616.17" cy="317.94" r="0.46"/>
<circle cx="617.33" cy="317.74" r="0.46"/>
<circle cx="618.52" cy="317.74" r="0.46"/>
<circle cx="619.68" cy="317.95" r="0.46"/>
<circle cx="620.78" cy="318.37" r="0.46"/>
<circle cx="621.79" cy="318.98" r="0.46"/>
<circle cx="622.68" cy="319.76" r="0.46"/>
<circle cx="623.41" cy="320.69" r="0.46"/>
<circle cx="623.97" cy="321.73" r="0.46"/>
<circle cx="624.33" cy="322.86" r="0.46"/>
<circle cx="624.48" cy="324.03" r="0.46"/>
<circle cx="624.43" cy="325.21" r="0.46"/>
<circle cx="624.16" cy="326.36" r="0.46"/>
<circle cx="623.69" cy="327.44" r="0.46"/>
<circle cx="623.04" cy="328.43" r="0.46"/>
<circle cx="622.22" cy="329.28" r="0.46"/>
<circle cx="621.26" cy="329.97" r="0.46"/>
<circle cx="620.19" cy="330.48" r="0.46"/>
<circle cx="619.05" cy="330.79" r="0.46"/>
<circle cx="617.88" cy="330.89" r="0.46"/>
<circle cx="616.70" cy="330.78" r="0.46"/>
<circle cx="615.56" cy="330.46" r="0.46"/>
<circle cx="614.50" cy="329.94" r="0.46"/>
<circle cx="613.55" cy="329.25" r="0.46"/>
<circle cx="612.73" cy="328.39" r="0.46"/>
<circle cx="612.09" cy="327.40" r="0.46"/>
<circle cx="611.63" cy="326.31" r="0.46"/>
<circle cx="611.37" cy="325.16" r="0.46"/>
<circle cx="611.32" cy="323.98" r="0.46"/>
<circle cx="611.48" cy="322.81" r="0.46"/>
<circle cx="611.85" cy="321.69" r="0.46"/>
<circle cx="612.41" cy="320.65" r="0.46"/>
<circle cx="613.15" cy="319.73" r="0.46"/>
<circle cx="614.05" cy="318.95" r="0.46"/>
<circle cx="615.02" cy="319.50" r="0.46"/>
<circle cx="615.92" cy="319.06" r="0.46"/>
<circle cx="616.89" cy="318.79" r="0.46"/>
<circle cx="617.89" cy="318.70" r="0.46"/>
<circle cx="618.89" cy="318.79" r="0.46"/>
<circle cx="619.85" cy="319.05" r="0.46"/>
<circle cx="620.76" cy="319.48" r="0.46"/>
<circle cx="621.57" cy="320.07" r="0.46"/>
<circle cx="622.27" cy="320.80" r="0.46"/>
<circle cx="622.83" cy="321.63" r="0.46"/>
<circle cx="623.22" cy="322.56" r="0.46"/>
<circle cx="623.45" cy="323.53" r="0.46"/>
<circle cx="623.50" cy="324.54" r="0.46"/>
<circle cx="623.36" cy="325.53" r="0.46"/>
<circle cx="623.06" cy="326.49" r="0.46"/>
<circle cx="622.58" cy="327.37" r="0.46"/>
<circle cx="621.96" cy="328.16" r="0.46"/>
<circle cx="621.20" cy="328.82" r="0.46"/>
<circle cx="620.34" cy="329.34" r="0.46"/>
<circle cx="619.40" cy="329.70" r="0.46"/>
<circle cx="618.42" cy="329.88" r="0.46"/>
<circle cx="617.41" cy="329.88" r="0.46"/>
<circle cx="616.42" cy="329.70" r="0.46"/>
<circle cx="615.48" cy="329.35" r="0.46"/>
<circle cx="614.62" cy="328.84" r="0.46"/>
<circle cx="613.86" cy="328.18" r="0.46"/>
<circle cx="613.23" cy="327.40" r="0.46"/>
<circle cx="612.76" cy="326.51" r="0.46"/>
<circle cx="612.44" cy="325.56" r="0.46"/>
<circle cx="612.31" cy="324.57" r="0.46"/>
<circle cx="612.35" cy="323.56" r="0.46"/>
<circle cx="612.57" cy="322.58" r="0.46"/>
<circle cx="612.96" cy="321.66" r="0.46"/>
<circle cx="613.51" cy="320.82" r="0.46"/>
<circle cx="614.20" cy="320.09" r="0.46"/>
<circle cx="615.07" cy="320.47" r="0.46"/>
<circle cx="615.80" cy="320.03" r="0.46"/>
<circle cx="616.59" cy="319.72" r="0.46"/>
<circle cx="617.43" cy="319.56" r="0.46"/>
<circle cx="618.29" cy="319.55" r="0.46"/>
<circle cx="619.13" cy="319.70" r="0.46"/>
<circle cx="619.93" cy="319.99" r="0.46"/>
<circle cx="620.66" cy="320.42" r="0.46"/>
<circle cx="621.31" cy="320.98" r="0.46"/>
<circle cx="621.85" cy="321.64" r="0.46"/>
<circle cx="622.26" cy="322.39" r="0.46"/>
<circle cx="622.53" cy="323.20" r="0.46"/>
<circle cx="622.65" cy="324.04" r="0.46"/>
<circle cx="622.62" cy="324.90" r="0.46"/>
<circle cx="622.44" cy="325.73" r="0.46"/>
<circle cx="622.11" cy="326.52" r="0.46"/>
<circle cx="621.65" cy="327.24" r="0.46"/>
<circle cx="621.06" cy="327.86" r="0.46"/>
<circle cx="620.38" cy="328.37" r="0.46"/>
<circle cx="619.61" cy="328.74" r="0.46"/>
<circle cx="618.79" cy="328.98" r="0.46"/>
<circle cx="617.94" cy="329.06" r="0.46"/>
<circle cx="617.09" cy="328.99" r="0.46"/>
<circle cx="616.27" cy="328.77" r="0.46"/>
<circle cx="615.49" cy="328.41" r="0.46"/>
<circle cx="614.80" cy="327.91" r="0.46"/>
<circle cx="614.20" cy="327.30" r="0.46"/>
<circle cx="613.73" cy="326.59" r="0.46"/>
<circle cx="613.39" cy="325.81" r="0.46"/>
<circle cx="613.19" cy="324.98" r="0.46"/>
<circle cx="613.14" cy="324.13" r="0.46"/>
<circle cx="613.25" cy="323.28" r="0.46"/>
<circle cx="613.51" cy="322.47" r="0.46"/>
<circle cx="613.90" cy="321.71" r="0.46"/>
<circle cx="614.43" cy="321.04" r="0.46"/>
<circle cx="615.19" cy="321.29" r="0.46"/>
<circle cx="615.77" cy="320.86" r="0.46"/>
<circle cx="616.42" cy="320.53" r="0.46"/>
<circle cx="617.12" cy="320.33" r="0.46"/>
<circle cx="617.84" cy="320.25" r="0.46"/>
<circle cx="618.56" cy="320.31" r="0.46"/>
<circle cx="619.27" cy="320.49" r="0.46"/>
<circle cx="619.92" cy="320.80" r="0.46"/>
<circle cx="620.52" cy="321.21" r="0.46"/>
<circle cx="621.03" cy="321.73" r="0.46"/>
<circle cx="621.43" cy="322.33" r="0.46"/>
<circle cx="621.73" cy="322.99" r="0.46"/>
<circle cx="621.90" cy="323.70" r="0.46"/>
<circle cx="621.94" cy="324.42" r="0.46"/>
<circle cx="621.86" cy="325.14" r="0.46"/>
<circle cx="621.64" cy="325.83" r="0.46"/>
<circle cx="621.31" cy="326.48" r="0.46"/>
<circle cx="620.87" cy="327.05" r="0.46"/>
<circle cx="620.33" cy="327.54" r="0.46"/>
<circle cx="619.71" cy="327.92" r="0.46"/>
<circle cx="619.03" cy="328.18" r="0.46"/>
<circle cx="618.32" cy="328.32" r="0.46"/>
<circle cx="617.60" cy="328.34" r="0.46"/>
<circle cx="616.88" cy="328.22" r="0.46"/>
<circle cx="616.20" cy="327.97" r="0.46"/>
<circle cx="615.57" cy="327.61" r="0.46"/>
<circle cx="615.02" cy="327.14" r="0.46"/>
<circle cx="614.56" cy="326.58" r="0.46"/>
<circle cx="614.20" cy="325.95" r="0.46"/>
<circle cx="613.97" cy="325.26" r="0.46"/>
<circle cx="613.86" cy="324.54" r="0.46"/>
<circle cx="613.88" cy="323.82" r="0.46"/>
<circle cx="614.03" cy="323.11" r="0.46"/>
<circle cx="614.31" cy="322.44" r="0.46"/>
<circle cx="614.70" cy="321.82" r="0.46"/>
<circle cx="615.36" cy="321.98" r="0.46"/>
<circle cx="615.82" cy="321.56" r="0.46"/>
<circle cx="616.34" cy="321.23" r="0.46"/>
<circle cx="616.91" cy="321.00" r="0.46"/>
<circle cx="617.52" cy="320.88" r="0.46"/>
<circle cx="618.14" cy="320.87" r="0.46"/>
<circle cx="618.74" cy="320.97" r="0.46"/>
<circle cx="619.33" cy="321.17" r="0.46"/>
<circle cx="619.86" cy="321.48" r="0.46"/>
<circle cx="620.34" cy="321.87" r="0.46"/>
<circle cx="620.73" cy="322.34" r="0.46"/>
<circle cx="621.03" cy="322.88" r="0.46"/>
<circle cx="621.24" cy="323.46" r="0.46"/>
<circle cx="621.33" cy="324.07" r="0.46"/>
<circle cx="621.32" cy="324.69" r="0.46"/>
<circle cx="621.19" cy="325.29" r="0.46"/>
<circle cx="620.96" cy="325.87" r="0.46"/>
<circle cx="620.63" cy="326.39" r="0.46"/>
<circle cx="620.22" cy="326.84" r="0.46"/>
<circle cx="619.73" cy="327.21" r="0.46"/>
<circle cx="619.18" cy="327.49" r="0.46"/>
<circle cx="618.59" cy="327.67" r="0.46"/>
<circle cx="617.97" cy="327.74" r="0.46"/>
<circle cx="617.36" cy="327.70" r="0.46"/>
<circle cx="616.76" cy="327.55" r="0.46"/>
<circle cx="616.20" cy="327.29" r="0.46"/>
<circle cx="615.69" cy="326.94" r="0.46"/>
<circle cx="615.26" cy="326.50" r="0.46"/>
<circle cx="614.91" cy="325.99" r="0.46"/>
<circle cx="614.65" cy="325.43" r="0.46"/>
<circle cx="614.50" cy="324.83" r="0.46"/>
<circle cx="614.46" cy="324.22" r="0.46"/>
<circle cx="614.53" cy="323.61" r="0.46"/>
<circle cx="614.71" cy="323.02" r="0.46"/>
<circle cx="614.99" cy="322.47" r="0.46"/></g>
<g fill="none" stroke="#4c7df6" stroke-width="1">
<circle cx="617.8" cy="324.3" r="200"/>
<path d="M417.6 124.4H817.6V524.8H417.6Z"/>
</g>
<g fill="#fff" stroke="#4c7df6" stroke-width="1">
<rect x="415.5" y="120.5" width="6" height="6"/><rect x="615.5" y="120.5" width="6" height="6"/><rect x="815.5" y="120.5" width="6" height="6"/>
<rect x="415.5" y="320.5" width="6" height="6"/><rect x="815.5" y="320.5" width="6" height="6"/>
<rect x="415.5" y="520.5" width="6" height="6"/><rect x="615.5" y="520.5" width="6" height="6"/><rect x="815.5" y="520.5" width="6" height="6"/>
</g>
<circle cx="617.8" cy="324.2" r="3.1" fill="#4c7df6"/>
</svg>

<div class="a" style="left:19px;top:8px;width:362.2px;height:580.5px;border-radius:5px;box-shadow:0 22px 44px rgba(0,0,0,.5),0 0 10px rgba(0,0,0,.1)"></div>
<div class="a" style="left:19px;top:8px;width:362.2px;height:580.5px;border-radius:5px 5px 4px 4px;background:linear-gradient(#eaeaea 0,#d3d3d3 22px,#e0e0e0 22px,#e0e0e0 23px,#535353 23px)"></div>
<div class="a" style="left:19px;top:31px;width:362.2px;height:557.5px;border-radius:0 0 4px 4px;box-shadow:inset 1px 0 0 #484848,inset -1px 0 0 #484848,inset 0 -1px 0 #484848"></div>
<div class="a" style="left:19px;top:8px;width:362.2px;height:23px;border:1px solid rgba(0,0,0,.09);border-bottom:none;border-radius:5px 5px 0 0"></div>
<div class="t" style="top:13.29px;font-size:13.6px;color:#363636;left:99.00px;width:200px;text-align:center;-webkit-text-stroke:0.15px #363636;">Transform Effect</div>
<div class="grp" style="left:34px;top:62px;width:332px;height:82px"></div>
<div class="grp" style="left:34px;top:169px;width:332px;height:82.5px"></div>
<div class="grp" style="left:34px;top:275px;width:332px;height:69px"></div>
<div class="grp" style="left:34px;top:369px;width:332px;height:140.5px"></div>
<div class="a" style="left:40.00px;top:57.00px;width:36.00px;height:12.00px;background:#535353"></div>
<div class="t" style="top:56.93px;font-size:11.9px;color:#f0f0f0;left:43.60px;-webkit-text-stroke:0.4px #f0f0f0;text-shadow:0 .5px 1px rgba(0,0,0,.75);">Scale</div>
<div class="a" style="left:40.00px;top:164.00px;width:37.00px;height:12.00px;background:#535353"></div>
<div class="t" style="top:163.67px;font-size:12.2px;color:#f0f0f0;left:44.00px;-webkit-text-stroke:0.4px #f0f0f0;text-shadow:0 .5px 1px rgba(0,0,0,.75);">Move</div>
<div class="a" style="left:40.00px;top:270.80px;width:45.00px;height:12.00px;background:#535353"></div>
<div class="t" style="top:270.13px;font-size:12.6px;color:#f0f0f0;left:44.00px;-webkit-text-stroke:0.4px #f0f0f0;text-shadow:0 .5px 1px rgba(0,0,0,.75);">Rotate</div>
<div class="a" style="left:40.00px;top:363.80px;width:53.00px;height:12.00px;background:#535353"></div>
<div class="t" style="top:362.80px;font-size:13px;color:#f0f0f0;left:44.00px;-webkit-text-stroke:0.4px #f0f0f0;text-shadow:0 .5px 1px rgba(0,0,0,.75);">Options</div>
<div class="t" style="top:83.66px;font-size:13.4px;color:#f0f0f0;left:44.40px;-webkit-text-stroke:0.4px #f0f0f0;text-shadow:0 .5px 1px rgba(0,0,0,.75);">Horizontal:</div>
<div class="t" style="top:113.91px;font-size:13.1px;color:#f0f0f0;left:61.70px;-webkit-text-stroke:0.4px #f0f0f0;text-shadow:0 .5px 1px rgba(0,0,0,.75);">Vertical:</div>
<div class="track" style="left:113px;top:89px;width:148px"></div>
<div class="a" style="left:170.2px;top:83.5px;width:13px;height:13px;border-radius:50%;background:#4da0f5;box-shadow:0 0 0 1px rgba(60,45,40,.7)"></div>
<div class="track" style="left:113px;top:119px;width:148px"></div>
<div class="thumb" style="left:170.2px;top:113.5px"></div>
<div class="inp" style="left:267px;top:80px;width:89px;height:20px;background:#fff;border:1.6px solid #5096ea"></div>
<div class="a" style="left:272.20px;top:82.10px;width:23.80px;height:14.50px;background:#b3d4fc"></div>
<div class="t" style="top:85.36px;font-size:12.8px;color:#222;left:272.90px;-webkit-text-stroke:0.25px #222;">85%</div>
<div class="inp" style="left:268px;top:110px;width:88px;height:19.5px"></div>
<div class="t" style="top:115.46px;font-size:12.8px;color:#f0f0f0;left:272.70px;-webkit-text-stroke:0.4px #f0f0f0;text-shadow:0 .5px 1px rgba(0,0,0,.75);">85%</div>
<div class="t" style="top:190.66px;font-size:13.4px;color:#f0f0f0;left:44.40px;-webkit-text-stroke:0.4px #f0f0f0;text-shadow:0 .5px 1px rgba(0,0,0,.75);">Horizontal:</div>
<div class="t" style="top:221.11px;font-size:13.1px;color:#f0f0f0;left:61.70px;-webkit-text-stroke:0.4px #f0f0f0;text-shadow:0 .5px 1px rgba(0,0,0,.75);">Vertical:</div>
<div class="track" style="left:113px;top:196px;width:148px"></div>
<div class="thumb" style="left:180.2px;top:190.5px"></div>
<div class="track" style="left:113px;top:226px;width:148px"></div>
<div class="thumb" style="left:180.2px;top:220.5px"></div>
<div class="inp" style="left:268px;top:187px;width:88px;height:20px"></div>
<div class="t" style="top:192.46px;font-size:12.8px;color:#f0f0f0;left:272.70px;-webkit-text-stroke:0.4px #f0f0f0;text-shadow:0 .5px 1px rgba(0,0,0,.75);">0 px</div>
<div class="inp" style="left:268px;top:217px;width:88px;height:20px"></div>
<div class="t" style="top:222.46px;font-size:12.8px;color:#f0f0f0;left:272.70px;-webkit-text-stroke:0.4px #f0f0f0;text-shadow:0 .5px 1px rgba(0,0,0,.75);">0 px</div>
<div class="t" style="top:306.95px;font-size:12.7px;color:#f0f0f0;left:72.00px;-webkit-text-stroke:0.4px #f0f0f0;text-shadow:0 .5px 1px rgba(0,0,0,.75);">Angle:</div>
<svg class="a" style="left:110.00px;top:292.00px;" width="40" height="40" viewBox="0 0 40 40"><circle cx="19.6" cy="19.6" r="15.9" fill="none" stroke="#e6e6e6" stroke-width="2"/><line x1="19.7" y1="19.9" x2="35.4" y2="18.2" stroke="#e6e6e6" stroke-width="2" stroke-linecap="round"/></svg>
<div class="inp" style="left:153.7px;top:302.3px;width:66px;height:19.5px"></div>
<div class="t" style="top:307.16px;font-size:12.8px;color:#f0f0f0;left:158.80px;-webkit-text-stroke:0.4px #f0f0f0;text-shadow:0 .5px 1px rgba(0,0,0,.75);">5,5°</div>
<div class="cb cbon" style="left:44.8px;top:387.9px"><svg class="a" style="left:0;top:0" width="11" height="11" viewBox="0 0 11 11"><path d="M1.7 5.7 L4.1 8 L8.6 3.3" fill="none" stroke="#262626" stroke-width="1.7"/></svg></div>
<div class="cb cbon" style="left:44.8px;top:412.8px"><svg class="a" style="left:0;top:0" width="11" height="11" viewBox="0 0 11 11"><path d="M1.7 5.7 L4.1 8 L8.6 3.3" fill="none" stroke="#262626" stroke-width="1.7"/></svg></div>
<div class="cb cbon" style="left:44.8px;top:437.8px"><svg class="a" style="left:0;top:0" width="11" height="11" viewBox="0 0 11 11"><path d="M1.7 5.7 L4.1 8 L8.6 3.3" fill="none" stroke="#262626" stroke-width="1.7"/></svg></div>
<div class="t" style="top:388.70px;font-size:13.0px;color:#f0f0f0;left:62.80px;-webkit-text-stroke:0.4px #f0f0f0;text-shadow:0 .5px 1px rgba(0,0,0,.75);">Transform Objects</div>
<div class="t" style="top:413.60px;font-size:13.0px;color:#f0f0f0;left:62.80px;-webkit-text-stroke:0.4px #f0f0f0;text-shadow:0 .5px 1px rgba(0,0,0,.75);">Transform Patterns</div>
<div class="t" style="top:438.83px;font-size:12.6px;color:#f0f0f0;left:62.30px;-webkit-text-stroke:0.4px #f0f0f0;text-shadow:0 .5px 1px rgba(0,0,0,.75);">Scale Strokes &amp; Effects</div>
<div class="cb" style="left:245.8px;top:387.8px"></div>
<div class="cb" style="left:245.8px;top:412.8px"></div>
<div class="cb" style="left:245.8px;top:437.8px"></div>
<div class="t" style="top:388.73px;font-size:12.6px;color:#f0f0f0;left:263.30px;-webkit-text-stroke:0.4px #f0f0f0;text-shadow:0 .5px 1px rgba(0,0,0,.75);">Reflect X</div>
<div class="t" style="top:413.73px;font-size:12.6px;color:#f0f0f0;left:263.30px;-webkit-text-stroke:0.4px #f0f0f0;text-shadow:0 .5px 1px rgba(0,0,0,.75);">Reflect Y</div>
<div class="t" style="top:438.73px;font-size:12.6px;color:#f0f0f0;left:263.30px;-webkit-text-stroke:0.4px #f0f0f0;text-shadow:0 .5px 1px rgba(0,0,0,.75);">Random</div>
<div class="a" style="left:43.60px;top:463.00px;width:312.90px;height:1.00px;background:#4a4a4a"></div>
<svg class="a" style="left:43.00px;top:473.00px;" width="22" height="22" viewBox="0 0 22 22"><rect x="1.5" y="1.5" width="5" height="5" rx="1.2" fill="none" stroke="#cfcfcf" stroke-width="1"/><rect x="8.5" y="1.5" width="5" height="5" rx="1.2" fill="none" stroke="#cfcfcf" stroke-width="1"/><rect x="15.5" y="1.5" width="5" height="5" rx="1.2" fill="none" stroke="#cfcfcf" stroke-width="1"/><rect x="1.5" y="8.5" width="5" height="5" rx="1.2" fill="none" stroke="#cfcfcf" stroke-width="1"/><rect x="9.0" y="9.0" width="4" height="4" fill="#e6e6e6"/><rect x="15.5" y="8.5" width="5" height="5" rx="1.2" fill="none" stroke="#cfcfcf" stroke-width="1"/><rect x="1.5" y="15.5" width="5" height="5" rx="1.2" fill="none" stroke="#cfcfcf" stroke-width="1"/><rect x="8.5" y="15.5" width="5" height="5" rx="1.2" fill="none" stroke="#cfcfcf" stroke-width="1"/><rect x="15.5" y="15.5" width="5" height="5" rx="1.2" fill="none" stroke="#cfcfcf" stroke-width="1"/><path d="M6.5 4h2M13.5 4h2M6.5 11h2M13.5 11h2M6.5 18h2M13.5 18h2M4 6.5v2M11 6.5v2M18 6.5v2M4 13.5v2M11 13.5v2M18 13.5v2" stroke="#cfcfcf" stroke-width="1"/></svg>
<div class="t" style="top:480.00px;font-size:12.4px;color:#f0f0f0;left:159.80px;-webkit-text-stroke:0.4px #f0f0f0;text-shadow:0 .5px 1px rgba(0,0,0,.75);">Copies</div>
<div class="inp" style="left:202.6px;top:474.5px;width:66px;height:20.5px"></div>
<div class="t" style="top:479.96px;font-size:12.8px;color:#f0f0f0;left:207.40px;-webkit-text-stroke:0.4px #f0f0f0;text-shadow:0 .5px 1px rgba(0,0,0,.75);">25</div>
<div class="cb" style="left:34.9px;top:538px"></div>
<div class="t" style="top:538.90px;font-size:12.4px;color:#f0f0f0;left:52.30px;-webkit-text-stroke:0.4px #f0f0f0;text-shadow:0 .5px 1px rgba(0,0,0,.75);">Preview</div>
<div class="btn" style="left:176.7px;top:532.5px;width:93px;height:26px"></div>
<div class="btn" style="left:273.8px;top:532.5px;width:92.5px;height:26px;border:2.5px solid #f4f4f4"></div>
<div class="t" style="top:539.63px;font-size:13.2px;color:#f0f0f0;left:176.70px;width:93px;text-align:center;-webkit-text-stroke:0.4px #f0f0f0;text-shadow:0 .5px 1px rgba(0,0,0,.75);">Cancel</div>
<div class="t" style="top:539.63px;font-size:13.2px;color:#f0f0f0;left:273.80px;width:92.5px;text-align:center;-webkit-text-stroke:0.4px #f0f0f0;text-shadow:0 .5px 1px rgba(0,0,0,.75);">OK</div>

<div class="a" style="left:895.00px;top:136.00px;width:242.50px;height:380.00px;background:#535353;border:1.5px solid #2c2c2c;border-radius:5px 5px 0 0;box-shadow:0 2px 6px rgba(0,0,0,.2)"></div>
<div class="a" style="left:896.50px;top:137.50px;width:239.50px;height:12.00px;background:#444;border-radius:3px 3px 0 0;border-bottom:1px solid #3b3b3b"></div>
<svg class="a" style="left:900.00px;top:140.00px;" width="9" height="9" viewBox="0 0 9 9"><path d="M1 1L8 8M8 1L1 8" stroke="#c8c8c8" stroke-width="1.3"/></svg>
<svg class="a" style="left:1121.00px;top:140.00px;" width="10" height="8" viewBox="0 0 10 8"><path d="M4.5 1L1.5 4L4.5 7M8.5 1L5.5 4L8.5 7" fill="none" stroke="#c8c8c8" stroke-width="1.1"/></svg>
<div class="a" style="left:896.50px;top:149.50px;width:239.50px;height:27.00px;background:#3f3f3f;border-bottom:1px solid #363636"></div>
<div class="a" style="left:896.50px;top:149.50px;width:76.80px;height:27.50px;background:#535353;border-right:1px solid #383838"></div>
<div class="t" style="top:158.41px;font-size:10.5px;color:#eeeeee;left:905.50px;font-weight:bold;-webkit-text-stroke:0.2px #eeeeee;text-shadow:0 .5px 1px rgba(0,0,0,.75);">Appearance</div>
<svg class="a" style="left:1119.00px;top:159.00px;" width="13" height="10" viewBox="0 0 13 10"><path d="M1 1.5H12M1 3.8H12M1 6.1H12M1 8.4H12" stroke="#c4c4c4" stroke-width="1"/></svg>
<div class="a" style="left:901.80px;top:183.50px;width:229.20px;height:304.00px;border:1px solid #5c5c5c;border-radius:3px;background:#535353"></div>
<div class="a" style="left:904.20px;top:186.20px;width:20.40px;height:19.60px;background:#fff;border:1px solid #2e2e2e;border-radius:2px"></div>
<svg class="a" style="left:904.20px;top:186.20px;" width="20" height="20" viewBox="0 0 20 20"><clipPath id="pc"><rect x="3" y="3" width="14" height="13.5"/></clipPath><g clip-path="url(#pc)"><path transform="rotate(0 10 9.8)" d="M10.3 9.8 Q13.5 8.5 14.2 3.6" fill="none" stroke="#000" stroke-width="2.3" stroke-linecap="round"/><path transform="rotate(45 10 9.8)" d="M10.3 9.8 Q13.5 8.5 14.2 3.6" fill="none" stroke="#000" stroke-width="2.3" stroke-linecap="round"/><path transform="rotate(90 10 9.8)" d="M10.3 9.8 Q13.5 8.5 14.2 3.6" fill="none" stroke="#000" stroke-width="2.3" stroke-linecap="round"/><path transform="rotate(135 10 9.8)" d="M10.3 9.8 Q13.5 8.5 14.2 3.6" fill="none" stroke="#000" stroke-width="2.3" stroke-linecap="round"/><path transform="rotate(180 10 9.8)" d="M10.3 9.8 Q13.5 8.5 14.2 3.6" fill="none" stroke="#000" stroke-width="2.3" stroke-linecap="round"/><path transform="rotate(225 10 9.8)" d="M10.3 9.8 Q13.5 8.5 14.2 3.6" fill="none" stroke="#000" stroke-width="2.3" stroke-linecap="round"/><path transform="rotate(270 10 9.8)" d="M10.3 9.8 Q13.5 8.5 14.2 3.6" fill="none" stroke="#000" stroke-width="2.3" stroke-linecap="round"/><path transform="rotate(315 10 9.8)" d="M10.3 9.8 Q13.5 8.5 14.2 3.6" fill="none" stroke="#000" stroke-width="2.3" stroke-linecap="round"/></g></svg>
<div class="t" style="top:191.16px;font-size:10.8px;color:#eeeeee;left:952.40px;font-weight:bold;text-shadow:0 .5px 1px rgba(0,0,0,.75);">Path</div>
<div class="a" style="left:902.50px;top:209.00px;width:228.00px;height:24.20px;background:#4d6480"></div>
<div class="a" style="left:926.10px;top:209.00px;width:1.60px;height:24.20px;background:#353a40"></div>
<svg class="a" style="left:906.00px;top:216.00px;" width="17" height="11" viewBox="0 0 17 11"><path d="M0.9 5 Q7.8 -2.6 14.7 5 Q7.8 12.6 0.9 5Z" fill="#e2e6ea"/><circle cx="7.8" cy="5" r="2.7" fill="#3f5068"/><circle cx="8.4" cy="4.5" r=".8" fill="#cfd6de"/></svg>
<svg class="a" style="left:933.00px;top:217.50px;" width="10" height="7" viewBox="0 0 10 7"><path d="M1.2 1.5L5 5.2L8.8 1.5" fill="none" stroke="#eeeeee" stroke-width="1.7"/></svg>
<div class="t" style="top:215.86px;font-size:10.8px;color:#eeeeee;left:952.20px;-webkit-text-stroke:0.3px #eeeeee;text-shadow:0 .5px 1px rgba(0,0,0,.75);">Stroke:</div>
<svg class="a" style="left:952.20px;top:227.00px;" width="34" height="2" viewBox="0 0 34 2"><path d="M0 1H34" stroke="#c8c8c8" stroke-width="1" stroke-dasharray="1 1"/></svg>
<div class="a" style="left:992.00px;top:211.80px;width:20.20px;height:19.50px;background:#000;border:1.5px solid #d4d4d4;border-radius:2px"></div>
<svg class="a" style="left:997.50px;top:217.00px;" width="9" height="9" viewBox="0 0 9 9"><rect x="0.8" y="0.8" width="7.4" height="7.4" fill="none" stroke="#e8e8e8" stroke-width="1.2"/><rect x="3" y="3" width="3" height="3" fill="#e8e8e8"/></svg>
<div class="a" style="left:1012.20px;top:212.20px;width:17.60px;height:18.80px;background:#454545;border-radius:0 2px 2px 0"></div>
<svg class="a" style="left:1016.00px;top:218.00px;" width="11" height="7" viewBox="0 0 11 7"><path d="M1 1.5L5.5 5.5L10 1.5" fill="none" stroke="#e0e0e0" stroke-width="1.3"/></svg>
<div class="a" style="left:1033.00px;top:212.20px;width:74.60px;height:18.80px;background:#454545;border-radius:2px"></div>
<div class="a" style="left:1049.60px;top:212.20px;width:1.00px;height:18.80px;background:#3a3a3a"></div>
<div class="a" style="left:1088.80px;top:212.20px;width:1.00px;height:18.80px;background:#3a3a3a"></div>
<svg class="a" style="left:1035.00px;top:214.00px;" width="13" height="16" viewBox="0 0 13 16"><path d="M2.5 5.5L6.5 2L10.5 5.5M2.5 10.5L6.5 14L10.5 10.5" fill="none" stroke="#e0e0e0" stroke-width="1.2"/></svg>
<div class="t" style="top:216.22px;font-size:11.2px;color:#eeeeee;left:1055.20px;-webkit-text-stroke:0.3px #eeeeee;text-shadow:0 .5px 1px rgba(0,0,0,.75);">12 pt</div>
<svg class="a" style="left:1093.00px;top:218.00px;" width="11" height="7" viewBox="0 0 11 7"><path d="M1 1.5L5.5 5.5L10 1.5" fill="none" stroke="#e0e0e0" stroke-width="1.3"/></svg>
<svg class="a" style="left:1113.00px;top:222.00px;" width="11" height="4" viewBox="0 0 11 4"><circle cx="1.5" cy="2" r="1.1" fill="#ddd"/><circle cx="5.5" cy="2" r="1.1" fill="#ddd"/><circle cx="9.5" cy="2" r="1.1" fill="#ddd"/></svg>
<div class="a" style="left:902.50px;top:257.00px;width:228.00px;height:1.00px;background:#4d4d4d"></div>
<div class="a" style="left:902.50px;top:258.00px;width:228.00px;height:1.00px;background:#5a5a5a"></div>
<div class="a" style="left:902.50px;top:282.00px;width:228.00px;height:1.00px;background:#4d4d4d"></div>
<div class="a" style="left:902.50px;top:283.00px;width:228.00px;height:1.00px;background:#5a5a5a"></div>
<div class="a" style="left:902.50px;top:307.00px;width:228.00px;height:1.00px;background:#4d4d4d"></div>
<div class="a" style="left:902.50px;top:308.00px;width:228.00px;height:1.00px;background:#5a5a5a"></div>
<div class="a" style="left:902.50px;top:332.00px;width:228.00px;height:1.00px;background:#4d4d4d"></div>
<div class="a" style="left:902.50px;top:333.00px;width:228.00px;height:1.00px;background:#5a5a5a"></div>
<div class="a" style="left:902.50px;top:357.00px;width:228.00px;height:1.00px;background:#4d4d4d"></div>
<div class="a" style="left:902.50px;top:358.00px;width:228.00px;height:1.00px;background:#5a5a5a"></div>
<div class="t" style="top:240.76px;font-size:10.8px;color:#eeeeee;left:977.00px;-webkit-text-stroke:0.3px #eeeeee;text-shadow:0 .5px 1px rgba(0,0,0,.75);">Opacity: Default</div>
<svg class="a" style="left:977.00px;top:251.70px;" width="39" height="2" viewBox="0 0 39 2"><path d="M0 1H39" stroke="#bbbbbb" stroke-width="1" stroke-dasharray="1 1"/></svg>
<div class="a" style="left:994.40px;top:262.70px;width:17.90px;height:17.00px;background:#fff;border:1.5px solid #cfcfcf;border-radius:2px;box-shadow:0 0 0 1px #3a3a3a"></div>
<svg class="a" style="left:996.00px;top:264.00px;" width="15" height="14" viewBox="0 0 15 14"><path d="M2.5 12L12.5 2" stroke="#d0021b" stroke-width="2"/></svg>
<div class="t" style="top:290.86px;font-size:10.8px;color:#eeeeee;left:977.00px;-webkit-text-stroke:0.3px #eeeeee;text-shadow:0 .5px 1px rgba(0,0,0,.75);">Opacity: Default</div>
<svg class="a" style="left:977.00px;top:301.70px;" width="39" height="2" viewBox="0 0 39 2"><path d="M0 1H39" stroke="#bbbbbb" stroke-width="1" stroke-dasharray="1 1"/></svg>
<div class="t" style="top:315.86px;font-size:10.8px;color:#eeeeee;left:955.30px;-webkit-text-stroke:0.3px #eeeeee;text-shadow:0 .5px 1px rgba(0,0,0,.75);">Transform</div>
<svg class="a" style="left:955.30px;top:326.70px;" width="47.200000000000045" height="2" viewBox="0 0 47.200000000000045 2"><path d="M0 1H47.200000000000045" stroke="#bbbbbb" stroke-width="1" stroke-dasharray="1 1"/></svg>
<div class="t" style="top:315.34px;font-size:12px;color:#c0c0c0;left:1113.50px;font-style:italic;font-family:"Liberation Serif",serif">fx</div>
<div class="t" style="top:340.96px;font-size:10.8px;color:#eeeeee;left:954.00px;-webkit-text-stroke:0.3px #eeeeee;text-shadow:0 .5px 1px rgba(0,0,0,.75);">Opacity: Default</div>
<svg class="a" style="left:954.00px;top:351.70px;" width="39" height="2" viewBox="0 0 39 2"><path d="M0 1H39" stroke="#bbbbbb" stroke-width="1" stroke-dasharray="1 1"/></svg>
<svg class="a" style="left:1044.00px;top:491.00px;" width="14" height="14" viewBox="0 0 14 14"><circle cx="7" cy="7" r="5.3" fill="none" stroke="#dcdcdc" stroke-width="1.6"/><path d="M3.3 3.3L10.7 10.7" stroke="#dcdcdc" stroke-width="1.6"/></svg>
<svg class="a" style="left:1071.00px;top:491.00px;" width="13" height="13" viewBox="0 0 13 13"><path d="M1.2 1.2H11.6V11.4H5.2L1.2 7.4Z" fill="#d6d6d6"/><path d="M1.2 7.4H5.2V11.4Z" fill="#f2f2f2"/><path d="M1.2 7.4H5.2V11.4" fill="none" stroke="#333" stroke-width=".6"/></svg>
<svg class="a" style="left:1096.00px;top:490.00px;" width="14" height="15" viewBox="0 0 14 15"><path d="M1.5 4.2L4.5 2.2H9.5L12.5 4.2Z" fill="#d0d0d0" stroke="#e0e0e0" stroke-width="1"/><path d="M5.5 2V1H8.5V2" fill="none" stroke="#d0d0d0" stroke-width="1"/><rect x="2.6" y="5.2" width="8.8" height="8.6" rx="1.2" fill="#9a9a9a" stroke="#d8d8d8" stroke-width="1.1"/><path d="M5.5 6.5V12.5M8.5 6.5V12.5M3.5 9.5H10.5" stroke="#b8b8b8" stroke-width=".7"/></svg>
<div class="a" style="left:896.50px;top:507.50px;width:239.50px;height:7.50px;background:#4a4a4a;border-top:2px solid #3a3a3a"></div>
<div class="a" style="left:1006.50px;top:509.00px;width:19.70px;height:5.00px;background:repeating-linear-gradient(90deg,#5a5a5a 0 1px,#474747 1px 2px)"></div>

<div class="a" style="left:744.00px;top:233.00px;width:242.50px;height:319.00px;background:#535353;border:1px solid #414141;box-shadow:0 4px 10px rgba(0,0,0,.28)"></div>
<div class="t" style="top:245.06px;font-size:10.8px;color:#eeeeee;left:513.20px;width:300px;text-align:right;-webkit-text-stroke:0.3px #eeeeee;text-shadow:0 .5px 1px rgba(0,0,0,.75);">Weight:</div>
<div class="a" style="left:816.40px;top:239.40px;width:96.20px;height:20.80px;background:#474747;border:1.5px solid #4a90e2;border-radius:3px"></div>
<div class="a" style="left:834.80px;top:240.90px;width:59.20px;height:17.80px;background:#fff"></div>
<div class="a" style="left:838.00px;top:242.50px;width:26.50px;height:14.50px;background:#b3d4fc"></div>
<svg class="a" style="left:819.00px;top:241.00px;" width="14" height="17" viewBox="0 0 14 17"><path d="M3 6L7 2.5L11 6M3 11L7 14.5L11 11" fill="none" stroke="#e0e0e0" stroke-width="1.2"/></svg>
<div class="t" style="top:244.42px;font-size:11.2px;color:#222;left:838.30px;-webkit-text-stroke:0.2px #222;">12 pt</div>
<svg class="a" style="left:898.00px;top:246.00px;" width="11" height="7" viewBox="0 0 11 7"><path d="M1 1.5L5.5 5.5L10 1.5" fill="none" stroke="#e6e6e6" stroke-width="1.3"/></svg>
<div class="t" style="top:270.76px;font-size:10.8px;color:#eeeeee;left:513.20px;width:300px;text-align:right;-webkit-text-stroke:0.3px #eeeeee;text-shadow:0 .5px 1px rgba(0,0,0,.75);">Cap:</div>
<div class="a" style="left:816.50px;top:265.20px;width:67.30px;height:21.10px;border:1px solid #5a5a5a;border-radius:3px;background:#535353"></div>
<div class="a" style="left:838.90px;top:266.20px;width:1.00px;height:19.10px;background:#4e4e4e"></div>
<div class="a" style="left:860.30px;top:266.20px;width:1.00px;height:19.10px;background:#4e4e4e"></div>
<div class="a" style="left:839.90px;top:266.20px;width:20.40px;height:19.10px;background:#343434;border-radius:2px"></div>
<svg class="a" style="left:820.45px;top:268.55px;opacity:1" width="15" height="15" viewBox="0 0 15 15"><rect x="5.5" y="1" width="8.6" height="13.2" fill="#d2d2d2" stroke="#eee" stroke-width=".6"/><path d="M3.5 7.6A2 2 0 0 1 5.5 5.6M3.5 7.6A2 2 0 0 0 5.5 9.6" fill="none" stroke="#d2d2d2" stroke-width="1"/><path d="M5.5 7.6H14" stroke="#1a1a1a" stroke-width="1"/><circle cx="5.5" cy="7.6" r="1.3" fill="#111"/></svg>
<svg class="a" style="left:842.60px;top:268.55px;opacity:1" width="15" height="15" viewBox="0 0 15 15"><path d="M13.6 1H8.2A6.6 6.6 0 0 0 8.2 14.2H13.6Z" fill="#d2d2d2" stroke="#eee" stroke-width=".6"/><path d="M7.8 7.6H13.6" stroke="#1a1a1a" stroke-width="1"/><circle cx="7.8" cy="7.6" r="1.3" fill="#111"/></svg>
<svg class="a" style="left:864.80px;top:268.55px;opacity:1" width="15" height="15" viewBox="0 0 15 15"><rect x="1.2" y="1" width="12.6" height="13.2" fill="#d2d2d2" stroke="#eee" stroke-width=".6"/><path d="M6.8 7.6H13.8" stroke="#1a1a1a" stroke-width="1"/><circle cx="6.8" cy="7.6" r="1.3" fill="#111"/></svg>
<div class="t" style="top:298.26px;font-size:10.8px;color:#eeeeee;left:513.20px;width:300px;text-align:right;-webkit-text-stroke:0.3px #eeeeee;text-shadow:0 .5px 1px rgba(0,0,0,.75);">Corner:</div>
<div class="a" style="left:816.50px;top:292.20px;width:67.30px;height:21.60px;border:1px solid #5a5a5a;border-radius:3px;background:#535353"></div>
<div class="a" style="left:838.90px;top:293.20px;width:1.00px;height:19.60px;background:#4e4e4e"></div>
<div class="a" style="left:860.30px;top:293.20px;width:1.00px;height:19.60px;background:#4e4e4e"></div>
<div class="a" style="left:817.50px;top:293.20px;width:21.40px;height:19.60px;background:#343434;border-radius:2px"></div>
<svg class="a" style="left:820.45px;top:295.80px;opacity:1" width="15" height="15" viewBox="0 0 15 15"><path d="M1.2 14V1.5H14V8.2H8V14Z" fill="#d2d2d2" stroke="#eee" stroke-width=".5"/><path d="M9 9.2H14V11.2H11V14H9Z" fill="#d2d2d2"/><path d="M6 6.4V14M6 6.4H14" stroke="#1a1a1a" stroke-width=".9"/><circle cx="6" cy="6.4" r="1.2" fill="#111"/><circle cx="10.2" cy="10.4" r=".8" fill="#111"/></svg>
<svg class="a" style="left:842.60px;top:295.80px;opacity:1" width="15" height="15" viewBox="0 0 15 15"><path d="M1.2 14V7A5.5 5.5 0 0 1 6.7 1.5H14V8.2H8V14Z" fill="#d2d2d2" stroke="#eee" stroke-width=".5"/><path d="M9 9.2H14V11.2H11V14H9Z" fill="#d2d2d2"/><path d="M6 6.4V14M6 6.4H14" stroke="#1a1a1a" stroke-width=".9"/><circle cx="6" cy="6.4" r="1.2" fill="#111"/><circle cx="10.2" cy="10.4" r=".8" fill="#111"/></svg>
<svg class="a" style="left:864.80px;top:295.80px;opacity:1" width="15" height="15" viewBox="0 0 15 15"><path d="M1.2 14V6.5L6.2 1.5H14V8.2H8V14Z" fill="#d2d2d2" stroke="#eee" stroke-width=".5"/><path d="M9 9.2H14V11.2H11V14H9Z" fill="#d2d2d2"/><path d="M6 6.4V14M6 6.4H14" stroke="#1a1a1a" stroke-width=".9"/><circle cx="6" cy="6.4" r="1.2" fill="#111"/><circle cx="10.2" cy="10.4" r=".8" fill="#111"/></svg>
<div class="t" style="top:298.16px;font-size:10.8px;color:#eeeeee;left:895.90px;-webkit-text-stroke:0.3px #eeeeee;text-shadow:0 .5px 1px rgba(0,0,0,.75);">Limit:</div>
<div class="a" style="left:926.60px;top:292.40px;width:43.40px;height:20.50px;background:#474747;border:1px solid #606060;border-radius:3px"></div>
<div class="t" style="top:298.02px;font-size:11.2px;color:#eeeeee;left:931.90px;-webkit-text-stroke:0.3px #eeeeee;text-shadow:0 .5px 1px rgba(0,0,0,.75);">10</div>
<div class="t" style="top:298.39px;font-size:11px;color:#eeeeee;left:973.20px;-webkit-text-stroke:0.2px #eeeeee;text-shadow:0 .5px 1px rgba(0,0,0,.75);">x</div>
<div class="t" style="top:324.86px;font-size:10.8px;color:#eeeeee;left:513.20px;width:300px;text-align:right;-webkit-text-stroke:0.3px #eeeeee;text-shadow:0 .5px 1px rgba(0,0,0,.75);">Align Stroke:</div>
<div class="a" style="left:816.50px;top:319.40px;width:67.30px;height:21.60px;border:1px solid #5a5a5a;border-radius:3px;background:#535353"></div>
<div class="a" style="left:838.90px;top:320.40px;width:1.00px;height:19.60px;background:#4e4e4e"></div>
<div class="a" style="left:860.30px;top:320.40px;width:1.00px;height:19.60px;background:#4e4e4e"></div>
<div class="a" style="left:817.50px;top:320.40px;width:21.40px;height:19.60px;background:#343434;border-radius:2px"></div>
<svg class="a" style="left:820.45px;top:323.00px;opacity:1" width="15" height="15" viewBox="0 0 15 15"><path d="M1.2 1.2H4.2V11H14V14H1.2Z" fill="#d2d2d2" stroke="#eee" stroke-width=".5"/><path d="M6.2 1.2H8.6V6.6H14V9H6.2Z" fill="#d2d2d2" stroke="#eee" stroke-width=".5"/><circle cx="5.2" cy="10" r="1.2" fill="#111"/></svg>
<svg class="a" style="left:842.60px;top:323.00px;opacity:0.38" width="15" height="15" viewBox="0 0 15 15"><path d="M5.5 1.2H8.5V6.6H14V9.6H5.5Z" fill="#d2d2d2"/><circle cx="4.8" cy="10.6" r="2.4" fill="none" stroke="#d2d2d2" stroke-width="1"/><path d="M3.2 1.2V8.6M7 12.6H14" stroke="#d2d2d2" stroke-width="1"/></svg>
<svg class="a" style="left:864.80px;top:323.00px;opacity:0.38" width="15" height="15" viewBox="0 0 15 15"><path d="M2.2 1.2H7.5V6.6H14V13H2.2Z" fill="#d2d2d2"/><path d="M7.5 6.6V9M7.5 6.6H9.5" stroke="#222" stroke-width="1"/></svg>
<div class="a" style="left:751.00px;top:347.00px;width:229.50px;height:1.00px;background:#4a4a4a"></div>
<div class="a" style="left:751.10px;top:358.10px;width:12.30px;height:12.30px;background:#d0d0d0;border:1px solid #ececec;border-radius:2px;box-shadow:0 0 0 1px rgba(0,0,0,.22)"></div>
<svg class="a" style="left:752.00px;top:359.00px;" width="11" height="11" viewBox="0 0 11 11"><path d="M2 5.5 L4.3 7.9 L8.7 2.9" fill="none" stroke="#262626" stroke-width="1.7"/></svg>
<div class="t" style="top:359.86px;font-size:10.8px;color:#eeeeee;left:768.70px;-webkit-text-stroke:0.35px #eeeeee;text-shadow:0 .5px 1px rgba(0,0,0,.75);">Dashed Line</div>
<div class="a" style="left:903.80px;top:353.40px;width:76.60px;height:21.70px;border:1px solid #4c4c4c;border-radius:3px"></div>
<div class="a" style="left:942.50px;top:354.30px;width:36.80px;height:19.80px;background:#333;border-radius:2px"></div>
<svg class="a" style="left:908.30px;top:358.30px;" width="28" height="12" viewBox="0 0 28 12"><path d="M1.5 1.5H6.5M10.5 1.5H17.5M21.5 1.5H26.5V6M1.5 6.5V10.5H6.5M10.5 10.5H17.5M21.5 10.5H26.5" fill="none" stroke="#ececec" stroke-width="1.7"/></svg>
<svg class="a" style="left:947.50px;top:358.30px;" width="28" height="12" viewBox="0 0 28 12"><path d="M1.5 5V1.5H6M10.5 1.5H17.5M22 1.5H26.5V5M1.5 7V10.5H6M10.5 10.5H17.5M22 10.5H26.5V7" fill="none" stroke="#ececec" stroke-width="1.7"/></svg>
<div class="a" style="left:750.50px;top:380.70px;width:34.20px;height:20.00px;background:#474747;border:1px solid #606060;border-radius:3px"></div>
<div class="t" style="top:404.22px;font-size:11.2px;color:#eeeeee;left:740.50px;width:54.5px;text-align:center;-webkit-text-stroke:0.3px #eeeeee;text-shadow:0 .5px 1px rgba(0,0,0,.75);">dash</div>
<div class="a" style="left:789.00px;top:380.70px;width:34.20px;height:20.00px;background:#474747;border:1px solid #606060;border-radius:3px"></div>
<div class="t" style="top:404.22px;font-size:11.2px;color:#eeeeee;left:779.00px;width:54.5px;text-align:center;-webkit-text-stroke:0.3px #eeeeee;text-shadow:0 .5px 1px rgba(0,0,0,.75);">gap</div>
<div class="a" style="left:827.50px;top:380.70px;width:34.20px;height:20.00px;background:#474747;border:1px solid #606060;border-radius:3px"></div>
<div class="t" style="top:404.22px;font-size:11.2px;color:#eeeeee;left:817.50px;width:54.5px;text-align:center;-webkit-text-stroke:0.3px #eeeeee;text-shadow:0 .5px 1px rgba(0,0,0,.75);">dash</div>
<div class="a" style="left:866.50px;top:380.70px;width:34.20px;height:20.00px;background:#474747;border:1px solid #606060;border-radius:3px"></div>
<div class="t" style="top:404.22px;font-size:11.2px;color:#eeeeee;left:856.50px;width:54.5px;text-align:center;-webkit-text-stroke:0.3px #eeeeee;text-shadow:0 .5px 1px rgba(0,0,0,.75);">gap</div>
<div class="a" style="left:905.80px;top:380.70px;width:34.20px;height:20.00px;background:#474747;border:1px solid #606060;border-radius:3px"></div>
<div class="t" style="top:404.22px;font-size:11.2px;color:#eeeeee;left:895.80px;width:54.5px;text-align:center;-webkit-text-stroke:0.3px #eeeeee;text-shadow:0 .5px 1px rgba(0,0,0,.75);">dash</div>
<div class="a" style="left:944.80px;top:380.70px;width:34.20px;height:20.00px;background:#474747;border:1px solid #606060;border-radius:3px"></div>
<div class="t" style="top:404.22px;font-size:11.2px;color:#eeeeee;left:934.80px;width:54.5px;text-align:center;-webkit-text-stroke:0.3px #eeeeee;text-shadow:0 .5px 1px rgba(0,0,0,.75);">gap</div>
<div class="t" style="top:386.59px;font-size:11px;color:#eeeeee;left:755.40px;-webkit-text-stroke:0.3px #eeeeee;text-shadow:0 .5px 1px rgba(0,0,0,.75);">0 pt</div>
<div class="t" style="top:386.59px;font-size:11px;color:#eeeeee;left:794.00px;-webkit-text-stroke:0.3px #eeeeee;text-shadow:0 .5px 1px rgba(0,0,0,.75);">18 pt</div>
<div class="a" style="left:751.00px;top:422.00px;width:229.50px;height:1.00px;background:#4a4a4a"></div>
<div class="t" style="top:434.96px;font-size:10.8px;color:#eeeeee;left:752.60px;-webkit-text-stroke:0.35px #eeeeee;text-shadow:0 .5px 1px rgba(0,0,0,.75);">Arrowheads:</div>
<div class="a" style="left:816.80px;top:429.70px;width:61.20px;height:19.90px;background:#454545;border:1px solid #4d4d4d;border-radius:3px"></div>
<div class="a" style="left:817.30px;top:430.20px;width:42.00px;height:18.90px;background:#e8e8e8"></div>
<div class="a" style="left:822.30px;top:439.00px;width:32.00px;height:2.00px;background:#111"></div>
<svg class="a" style="left:863.80px;top:436.50px;" width="11" height="7" viewBox="0 0 11 7"><path d="M1 1.5L5.5 5.5L10 1.5" fill="none" stroke="#e6e6e6" stroke-width="1.3"/></svg>
<div class="a" style="left:888.80px;top:429.70px;width:61.40px;height:19.90px;background:#454545;border:1px solid #4d4d4d;border-radius:3px"></div>
<div class="a" style="left:889.30px;top:430.20px;width:42.30px;height:18.90px;background:#e8e8e8"></div>
<div class="a" style="left:894.30px;top:439.00px;width:32.30px;height:2.00px;background:#111"></div>
<svg class="a" style="left:936.10px;top:436.50px;" width="11" height="7" viewBox="0 0 11 7"><path d="M1 1.5L5.5 5.5L10 1.5" fill="none" stroke="#e6e6e6" stroke-width="1.3"/></svg>
<svg class="a" style="left:961.00px;top:433.00px;" width="15" height="14" viewBox="0 0 15 14"><path d="M1 4.5H12M9 1.5L12.5 4.5L9 7.5M14 9.5H3M6 6.5L2.5 9.5L6 12.5" fill="none" stroke="#888" stroke-width="1.5"/></svg>
<div class="t" style="top:466.06px;font-size:10.8px;color:#7a7a7a;left:512.80px;width:300px;text-align:right;-webkit-text-stroke:0.25px #7a7a7a;">Scale:</div>
<div class="a" style="left:816.80px;top:459.30px;width:61.20px;height:20.20px;background:#4f4f4f;border:1px solid #555;border-radius:3px"></div>
<div class="a" style="left:833.80px;top:460.00px;width:1.00px;height:19.00px;background:#474747"></div>
<svg class="a" style="left:818.80px;top:461.00px;" width="14" height="17" viewBox="0 0 14 17"><path d="M3 6L7 2.5L11 6M3 11L7 14.5L11 11" fill="none" stroke="#6c6c6c" stroke-width="1.2"/></svg>
<div class="t" style="top:465.69px;font-size:11px;color:#686868;left:837.80px;-webkit-text-stroke:0.2px #686868;">100%</div>
<div class="a" style="left:888.90px;top:459.30px;width:61.30px;height:20.20px;background:#4f4f4f;border:1px solid #555;border-radius:3px"></div>
<div class="a" style="left:905.90px;top:460.00px;width:1.00px;height:19.00px;background:#474747"></div>
<svg class="a" style="left:890.90px;top:461.00px;" width="14" height="17" viewBox="0 0 14 17"><path d="M3 6L7 2.5L11 6M3 11L7 14.5L11 11" fill="none" stroke="#6c6c6c" stroke-width="1.2"/></svg>
<div class="t" style="top:465.69px;font-size:11px;color:#686868;left:909.90px;-webkit-text-stroke:0.2px #686868;">100%</div>
<svg class="a" style="left:960.00px;top:461.00px;" width="16" height="18" viewBox="0 0 16 18"><path d="M5 8V4.5A3 3 0 0 1 11 4.5V8M5 10V13.5A3 3 0 0 0 11 13.5V10M2 2L14 16" fill="none" stroke="#767676" stroke-width="1.4"/></svg>
<div class="t" style="top:495.56px;font-size:10.8px;color:#7a7a7a;left:512.80px;width:300px;text-align:right;-webkit-text-stroke:0.25px #7a7a7a;">Align:</div>
<div class="a" style="left:816.80px;top:488.20px;width:44.10px;height:21.60px;border:1px solid #4d4d4d;border-radius:3px"></div>
<div class="a" style="left:838.50px;top:489.00px;width:1.00px;height:20.00px;background:#4d4d4d"></div>
<svg class="a" style="left:820.50px;top:492.00px;" width="15" height="13" viewBox="0 0 15 13"><path d="M1 4H8M1 8H13M10 5.5L13 8L10 10.5" fill="none" stroke="#6e6e6e" stroke-width="1.4"/><path d="M7 1V12" stroke="#6e6e6e" stroke-width="1"/></svg>
<svg class="a" style="left:842.50px;top:492.00px;" width="15" height="13" viewBox="0 0 15 13"><path d="M1 4H13M1 8H10M10 5.5L13 8L10 10.5" fill="none" stroke="#6e6e6e" stroke-width="1.4"/><path d="M12 1V6" stroke="#6e6e6e" stroke-width="1"/></svg>
<div class="a" style="left:751.00px;top:516.20px;width:229.50px;height:1.00px;background:#4a4a4a"></div>
<div class="t" style="top:529.26px;font-size:10.8px;color:#eeeeee;left:512.80px;width:300px;text-align:right;-webkit-text-stroke:0.35px #eeeeee;text-shadow:0 .5px 1px rgba(0,0,0,.75);">Profile:</div>
<div class="a" style="left:816.80px;top:524.00px;width:110.40px;height:20.40px;background:#454545;border:1px solid #4d4d4d;border-radius:3px"></div>
<div class="a" style="left:817.30px;top:524.50px;width:90.90px;height:19.40px;background:#e8e8e8"></div>
<div class="a" style="left:822.00px;top:533.00px;width:36.00px;height:2.00px;background:#111"></div>
<div class="t" style="top:529.90px;font-size:10.4px;color:#1a1a1a;left:863.90px;font-weight:bold;-webkit-text-stroke:0.1px #1a1a1a;">Uniform</div>
<svg class="a" style="left:912.50px;top:530.50px;" width="11" height="7" viewBox="0 0 11 7"><path d="M1 1.5L5.5 5.5L10 1.5" fill="none" stroke="#e6e6e6" stroke-width="1.3"/></svg>
<svg class="a" style="left:936.00px;top:527.00px;" width="16" height="14" viewBox="0 0 16 14"><path d="M1.5 2.5L6 7L1.5 11.5Z" fill="none" stroke="#7c7c7c" stroke-width="1.2"/><path d="M14.5 2.5L10 7L14.5 11.5Z" fill="#7c7c7c"/><path d="M8 1V13" stroke="#7c7c7c" stroke-width="1.2" stroke-dasharray="1.5 1"/></svg>
<svg class="a" style="left:961.00px;top:526.00px;" width="14" height="16" viewBox="0 0 14 16"><path d="M2 1.5H12L7 6.5Z" fill="#7c7c7c"/><path d="M2 14.5H12L7 9.5Z" fill="none" stroke="#7c7c7c" stroke-width="1.2"/><path d="M1 8H13" stroke="#7c7c7c" stroke-width="1.2" stroke-dasharray="1.5 1"/></svg>

</body></html>
